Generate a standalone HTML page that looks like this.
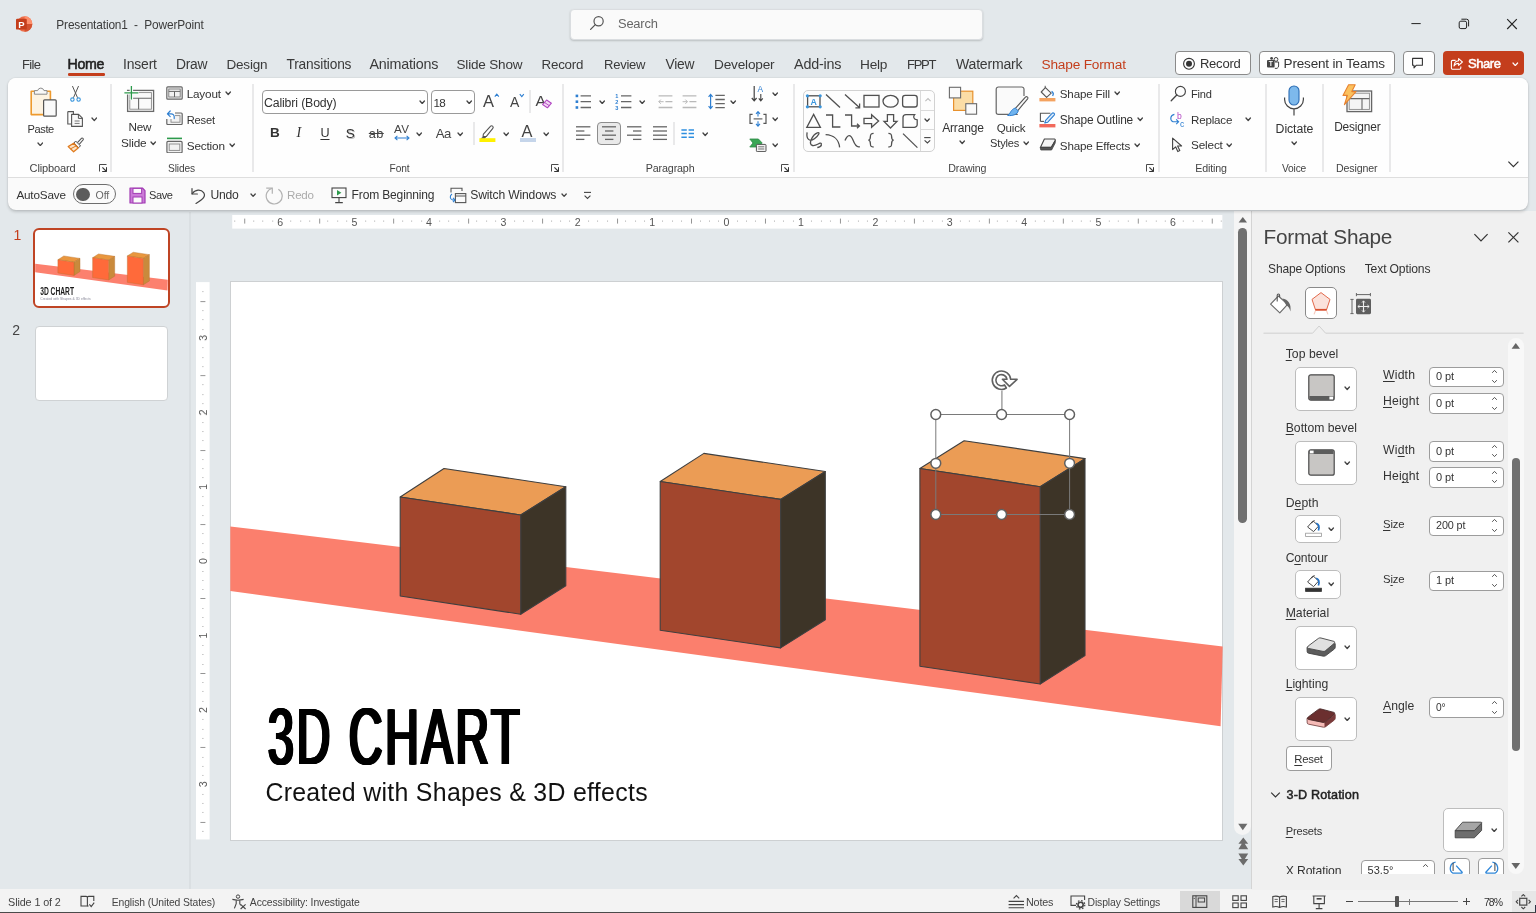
<!DOCTYPE html>
<html lang="en"><head><meta charset="utf-8"><title>Presentation1 - PowerPoint</title>
<style>
html,body{margin:0;padding:0}
body{width:1536px;height:913px;overflow:hidden;position:relative;font-family:"Liberation Sans", sans-serif;background:#E3E8EB}
#app{position:absolute;left:0;top:0;width:1536px;height:913px;overflow:hidden;will-change:transform}
.a{position:absolute;display:block}
.t{position:absolute;white-space:pre;line-height:1}
u{text-decoration:underline;text-underline-offset:1.5px;text-decoration-thickness:1px}

</style></head><body>
<div id="app">
<div class="a" style="left:0.00px;top:211.00px;width:190.00px;height:678.50px;background:#E3E8EB;"></div>
<div class="a" style="left:189.00px;top:212.00px;width:2.00px;height:677.50px;background:#DADFE2;"></div>
<div class="t" style='left:13.40px;top:228.00px;font-size:14px;color:#C43E1C;'>1</div>
<div class="a" style="left:32.90px;top:227.90px;width:137.60px;height:79.90px;background:#fff;border:2.4px solid #BF4424;box-sizing:border-box;border-radius:6px;"></div>
<svg class="a" style="left:35.30px;top:230.80px;border-radius:3px;overflow:hidden;" width="133" height="74.8" viewBox="0 0 133 74.8"><g transform="translate(-30.57,-37.64) scale(0.1336)"><polygon points="230.3,526.4 1222.7,646.6 1220.6,726.2 230.3,591.1" fill="#FC806E"/><polygon points="400.2,497.0 444.0,468.5 565.8,486.7 520.7,515.0" fill="#E9973F" stroke="#B5722E" stroke-width="3" stroke-linejoin="round"/><polygon points="520.7,515.0 565.8,486.7 565.8,585.7 520.7,614.2" fill="#C98A3C" stroke="#B5722E" stroke-width="3" stroke-linejoin="round"/><polygon points="400.2,497.0 520.7,515.0 520.7,614.2 400.2,596.0" fill="#FF6A3A" stroke="#B5722E" stroke-width="3" stroke-linejoin="round"/><polygon points="660.2,481.5 703.9,453.4 825.3,471.5 780.6,499.4" fill="#E9973F" stroke="#B5722E" stroke-width="3" stroke-linejoin="round"/><polygon points="780.6,499.4 825.3,471.5 825.3,619.8 780.6,647.9" fill="#C98A3C" stroke="#B5722E" stroke-width="3" stroke-linejoin="round"/><polygon points="660.2,481.5 780.6,499.4 780.6,647.9 660.2,630.3" fill="#FF6A3A" stroke="#B5722E" stroke-width="3" stroke-linejoin="round"/><polygon points="919.9,468.5 964.1,440.7 1085.0,458.6 1040.2,486.8" fill="#E9973F" stroke="#B5722E" stroke-width="3" stroke-linejoin="round"/><polygon points="1040.2,486.8 1085.0,458.6 1085.0,655.6 1040.2,684.0" fill="#C98A3C" stroke="#B5722E" stroke-width="3" stroke-linejoin="round"/><polygon points="919.9,468.5 1040.2,486.8 1040.2,684.0 919.9,666.2" fill="#FF6A3A" stroke="#B5722E" stroke-width="3" stroke-linejoin="round"/></g><text x="5.2" y="64.3" font-family="Liberation Sans, sans-serif" font-weight="700" font-size="11.4" fill="#1a1a1a" textLength="33.8" lengthAdjust="spacingAndGlyphs">3D CHART</text><text x="5.2" y="69" font-family="Liberation Sans, sans-serif" font-size="3.2" fill="#8a8a9a" textLength="50.6" lengthAdjust="spacingAndGlyphs">Created with Shapes &amp; 3D effects</text></svg>
<div class="t" style='left:12.20px;top:323.00px;font-size:14px;color:#444;'>2</div>
<div class="a" style="left:35.20px;top:325.90px;width:133.10px;height:74.70px;background:#fff;border:1px solid #CFD2D4;box-sizing:border-box;border-radius:4px;"></div>
<svg class="a" style="left:232.00px;top:215.40px;" width="990.6" height="13.6" viewBox="0 0 990.6 13.6"><rect x="0" y="0" width="990.6" height="13.6" fill="#fff"/><rect x="2.0" y="5.6" width="1" height="1" fill="#a6a6a6"/><line x1="12.5" y1="3.6" x2="12.5" y2="8.6" stroke="#949494" stroke-width="1"/><rect x="21.0" y="5.6" width="1" height="1" fill="#a6a6a6"/><rect x="30.0" y="5.6" width="1" height="1" fill="#a6a6a6"/><rect x="40.0" y="5.6" width="1" height="1" fill="#a6a6a6"/><text x="48.0" y="10.6" font-size="10.6" text-anchor="middle" fill="#555" font-family="Liberation Sans, sans-serif">6</text><rect x="58.0" y="5.6" width="1" height="1" fill="#a6a6a6"/><rect x="68.0" y="5.6" width="1" height="1" fill="#a6a6a6"/><rect x="77.0" y="5.6" width="1" height="1" fill="#a6a6a6"/><line x1="87.5" y1="3.6" x2="87.5" y2="8.6" stroke="#949494" stroke-width="1"/><rect x="95.0" y="5.6" width="1" height="1" fill="#a6a6a6"/><rect x="105.0" y="5.6" width="1" height="1" fill="#a6a6a6"/><rect x="114.0" y="5.6" width="1" height="1" fill="#a6a6a6"/><text x="122.4" y="10.6" font-size="10.6" text-anchor="middle" fill="#555" font-family="Liberation Sans, sans-serif">5</text><rect x="133.0" y="5.6" width="1" height="1" fill="#a6a6a6"/><rect x="142.0" y="5.6" width="1" height="1" fill="#a6a6a6"/><rect x="151.0" y="5.6" width="1" height="1" fill="#a6a6a6"/><line x1="161.5" y1="3.6" x2="161.5" y2="8.6" stroke="#949494" stroke-width="1"/><rect x="170.0" y="5.6" width="1" height="1" fill="#a6a6a6"/><rect x="179.0" y="5.6" width="1" height="1" fill="#a6a6a6"/><rect x="189.0" y="5.6" width="1" height="1" fill="#a6a6a6"/><text x="196.8" y="10.6" font-size="10.6" text-anchor="middle" fill="#555" font-family="Liberation Sans, sans-serif">4</text><rect x="207.0" y="5.6" width="1" height="1" fill="#a6a6a6"/><rect x="216.0" y="5.6" width="1" height="1" fill="#a6a6a6"/><rect x="226.0" y="5.6" width="1" height="1" fill="#a6a6a6"/><line x1="236.5" y1="3.6" x2="236.5" y2="8.6" stroke="#949494" stroke-width="1"/><rect x="244.0" y="5.6" width="1" height="1" fill="#a6a6a6"/><rect x="254.0" y="5.6" width="1" height="1" fill="#a6a6a6"/><rect x="263.0" y="5.6" width="1" height="1" fill="#a6a6a6"/><text x="271.3" y="10.6" font-size="10.6" text-anchor="middle" fill="#555" font-family="Liberation Sans, sans-serif">3</text><rect x="282.0" y="5.6" width="1" height="1" fill="#a6a6a6"/><rect x="291.0" y="5.6" width="1" height="1" fill="#a6a6a6"/><rect x="300.0" y="5.6" width="1" height="1" fill="#a6a6a6"/><line x1="310.5" y1="3.6" x2="310.5" y2="8.6" stroke="#949494" stroke-width="1"/><rect x="319.0" y="5.6" width="1" height="1" fill="#a6a6a6"/><rect x="328.0" y="5.6" width="1" height="1" fill="#a6a6a6"/><rect x="337.0" y="5.6" width="1" height="1" fill="#a6a6a6"/><text x="345.7" y="10.6" font-size="10.6" text-anchor="middle" fill="#555" font-family="Liberation Sans, sans-serif">2</text><rect x="356.0" y="5.6" width="1" height="1" fill="#a6a6a6"/><rect x="365.0" y="5.6" width="1" height="1" fill="#a6a6a6"/><rect x="375.0" y="5.6" width="1" height="1" fill="#a6a6a6"/><line x1="385.5" y1="3.6" x2="385.5" y2="8.6" stroke="#949494" stroke-width="1"/><rect x="393.0" y="5.6" width="1" height="1" fill="#a6a6a6"/><rect x="403.0" y="5.6" width="1" height="1" fill="#a6a6a6"/><rect x="412.0" y="5.6" width="1" height="1" fill="#a6a6a6"/><text x="420.1" y="10.6" font-size="10.6" text-anchor="middle" fill="#555" font-family="Liberation Sans, sans-serif">1</text><rect x="430.0" y="5.6" width="1" height="1" fill="#a6a6a6"/><rect x="440.0" y="5.6" width="1" height="1" fill="#a6a6a6"/><rect x="449.0" y="5.6" width="1" height="1" fill="#a6a6a6"/><line x1="459.5" y1="3.6" x2="459.5" y2="8.6" stroke="#949494" stroke-width="1"/><rect x="468.0" y="5.6" width="1" height="1" fill="#a6a6a6"/><rect x="477.0" y="5.6" width="1" height="1" fill="#a6a6a6"/><rect x="486.0" y="5.6" width="1" height="1" fill="#a6a6a6"/><text x="494.5" y="10.6" font-size="10.6" text-anchor="middle" fill="#555" font-family="Liberation Sans, sans-serif">0</text><rect x="505.0" y="5.6" width="1" height="1" fill="#a6a6a6"/><rect x="514.0" y="5.6" width="1" height="1" fill="#a6a6a6"/><rect x="523.0" y="5.6" width="1" height="1" fill="#a6a6a6"/><line x1="533.5" y1="3.6" x2="533.5" y2="8.6" stroke="#949494" stroke-width="1"/><rect x="542.0" y="5.6" width="1" height="1" fill="#a6a6a6"/><rect x="551.0" y="5.6" width="1" height="1" fill="#a6a6a6"/><rect x="561.0" y="5.6" width="1" height="1" fill="#a6a6a6"/><text x="569.0" y="10.6" font-size="10.6" text-anchor="middle" fill="#555" font-family="Liberation Sans, sans-serif">1</text><rect x="579.0" y="5.6" width="1" height="1" fill="#a6a6a6"/><rect x="589.0" y="5.6" width="1" height="1" fill="#a6a6a6"/><rect x="598.0" y="5.6" width="1" height="1" fill="#a6a6a6"/><line x1="608.5" y1="3.6" x2="608.5" y2="8.6" stroke="#949494" stroke-width="1"/><rect x="616.0" y="5.6" width="1" height="1" fill="#a6a6a6"/><rect x="626.0" y="5.6" width="1" height="1" fill="#a6a6a6"/><rect x="635.0" y="5.6" width="1" height="1" fill="#a6a6a6"/><text x="643.4" y="10.6" font-size="10.6" text-anchor="middle" fill="#555" font-family="Liberation Sans, sans-serif">2</text><rect x="654.0" y="5.6" width="1" height="1" fill="#a6a6a6"/><rect x="663.0" y="5.6" width="1" height="1" fill="#a6a6a6"/><rect x="672.0" y="5.6" width="1" height="1" fill="#a6a6a6"/><line x1="682.5" y1="3.6" x2="682.5" y2="8.6" stroke="#949494" stroke-width="1"/><rect x="691.0" y="5.6" width="1" height="1" fill="#a6a6a6"/><rect x="700.0" y="5.6" width="1" height="1" fill="#a6a6a6"/><rect x="710.0" y="5.6" width="1" height="1" fill="#a6a6a6"/><text x="717.8" y="10.6" font-size="10.6" text-anchor="middle" fill="#555" font-family="Liberation Sans, sans-serif">3</text><rect x="728.0" y="5.6" width="1" height="1" fill="#a6a6a6"/><rect x="737.0" y="5.6" width="1" height="1" fill="#a6a6a6"/><rect x="747.0" y="5.6" width="1" height="1" fill="#a6a6a6"/><line x1="757.5" y1="3.6" x2="757.5" y2="8.6" stroke="#949494" stroke-width="1"/><rect x="765.0" y="5.6" width="1" height="1" fill="#a6a6a6"/><rect x="775.0" y="5.6" width="1" height="1" fill="#a6a6a6"/><rect x="784.0" y="5.6" width="1" height="1" fill="#a6a6a6"/><text x="792.3" y="10.6" font-size="10.6" text-anchor="middle" fill="#555" font-family="Liberation Sans, sans-serif">4</text><rect x="803.0" y="5.6" width="1" height="1" fill="#a6a6a6"/><rect x="812.0" y="5.6" width="1" height="1" fill="#a6a6a6"/><rect x="821.0" y="5.6" width="1" height="1" fill="#a6a6a6"/><line x1="831.5" y1="3.6" x2="831.5" y2="8.6" stroke="#949494" stroke-width="1"/><rect x="840.0" y="5.6" width="1" height="1" fill="#a6a6a6"/><rect x="849.0" y="5.6" width="1" height="1" fill="#a6a6a6"/><rect x="858.0" y="5.6" width="1" height="1" fill="#a6a6a6"/><text x="866.7" y="10.6" font-size="10.6" text-anchor="middle" fill="#555" font-family="Liberation Sans, sans-serif">5</text><rect x="877.0" y="5.6" width="1" height="1" fill="#a6a6a6"/><rect x="886.0" y="5.6" width="1" height="1" fill="#a6a6a6"/><rect x="896.0" y="5.6" width="1" height="1" fill="#a6a6a6"/><line x1="906.5" y1="3.6" x2="906.5" y2="8.6" stroke="#949494" stroke-width="1"/><rect x="914.0" y="5.6" width="1" height="1" fill="#a6a6a6"/><rect x="924.0" y="5.6" width="1" height="1" fill="#a6a6a6"/><rect x="933.0" y="5.6" width="1" height="1" fill="#a6a6a6"/><text x="941.1" y="10.6" font-size="10.6" text-anchor="middle" fill="#555" font-family="Liberation Sans, sans-serif">6</text><rect x="951.0" y="5.6" width="1" height="1" fill="#a6a6a6"/><rect x="961.0" y="5.6" width="1" height="1" fill="#a6a6a6"/><rect x="970.0" y="5.6" width="1" height="1" fill="#a6a6a6"/><line x1="980.5" y1="3.6" x2="980.5" y2="8.6" stroke="#949494" stroke-width="1"/><rect x="989.0" y="5.6" width="1" height="1" fill="#a6a6a6"/></svg>
<svg class="a" style="left:196.00px;top:282.00px;" width="13.6" height="557.6" viewBox="0 0 13.6 557.6"><rect x="0" y="0" width="13.6" height="557.6" fill="#fff"/><rect x="6.4" y="9.0" width="1" height="1" fill="#a6a6a6"/><line x1="4.4" y1="19.5" x2="9.4" y2="19.5" stroke="#949494" stroke-width="1"/><rect x="6.4" y="28.0" width="1" height="1" fill="#a6a6a6"/><rect x="6.4" y="37.0" width="1" height="1" fill="#a6a6a6"/><rect x="6.4" y="47.0" width="1" height="1" fill="#a6a6a6"/><text transform="translate(10.6,55.8) rotate(-90)" font-size="10.6" text-anchor="middle" fill="#555" font-family="Liberation Sans, sans-serif">3</text><rect x="6.4" y="65.0" width="1" height="1" fill="#a6a6a6"/><rect x="6.4" y="75.0" width="1" height="1" fill="#a6a6a6"/><rect x="6.4" y="84.0" width="1" height="1" fill="#a6a6a6"/><line x1="4.4" y1="93.5" x2="9.4" y2="93.5" stroke="#949494" stroke-width="1"/><rect x="6.4" y="102.0" width="1" height="1" fill="#a6a6a6"/><rect x="6.4" y="112.0" width="1" height="1" fill="#a6a6a6"/><rect x="6.4" y="121.0" width="1" height="1" fill="#a6a6a6"/><text transform="translate(10.6,130.2) rotate(-90)" font-size="10.6" text-anchor="middle" fill="#555" font-family="Liberation Sans, sans-serif">2</text><rect x="6.4" y="140.0" width="1" height="1" fill="#a6a6a6"/><rect x="6.4" y="149.0" width="1" height="1" fill="#a6a6a6"/><rect x="6.4" y="158.0" width="1" height="1" fill="#a6a6a6"/><line x1="4.4" y1="168.5" x2="9.4" y2="168.5" stroke="#949494" stroke-width="1"/><rect x="6.4" y="177.0" width="1" height="1" fill="#a6a6a6"/><rect x="6.4" y="186.0" width="1" height="1" fill="#a6a6a6"/><rect x="6.4" y="195.0" width="1" height="1" fill="#a6a6a6"/><text transform="translate(10.6,204.7) rotate(-90)" font-size="10.6" text-anchor="middle" fill="#555" font-family="Liberation Sans, sans-serif">1</text><rect x="6.4" y="214.0" width="1" height="1" fill="#a6a6a6"/><rect x="6.4" y="223.0" width="1" height="1" fill="#a6a6a6"/><rect x="6.4" y="233.0" width="1" height="1" fill="#a6a6a6"/><line x1="4.4" y1="242.5" x2="9.4" y2="242.5" stroke="#949494" stroke-width="1"/><rect x="6.4" y="251.0" width="1" height="1" fill="#a6a6a6"/><rect x="6.4" y="261.0" width="1" height="1" fill="#a6a6a6"/><rect x="6.4" y="270.0" width="1" height="1" fill="#a6a6a6"/><text transform="translate(10.6,279.1) rotate(-90)" font-size="10.6" text-anchor="middle" fill="#555" font-family="Liberation Sans, sans-serif">0</text><rect x="6.4" y="289.0" width="1" height="1" fill="#a6a6a6"/><rect x="6.4" y="298.0" width="1" height="1" fill="#a6a6a6"/><rect x="6.4" y="307.0" width="1" height="1" fill="#a6a6a6"/><line x1="4.4" y1="316.5" x2="9.4" y2="316.5" stroke="#949494" stroke-width="1"/><rect x="6.4" y="326.0" width="1" height="1" fill="#a6a6a6"/><rect x="6.4" y="335.0" width="1" height="1" fill="#a6a6a6"/><rect x="6.4" y="344.0" width="1" height="1" fill="#a6a6a6"/><text transform="translate(10.6,353.5) rotate(-90)" font-size="10.6" text-anchor="middle" fill="#555" font-family="Liberation Sans, sans-serif">1</text><rect x="6.4" y="363.0" width="1" height="1" fill="#a6a6a6"/><rect x="6.4" y="372.0" width="1" height="1" fill="#a6a6a6"/><rect x="6.4" y="382.0" width="1" height="1" fill="#a6a6a6"/><line x1="4.4" y1="391.5" x2="9.4" y2="391.5" stroke="#949494" stroke-width="1"/><rect x="6.4" y="400.0" width="1" height="1" fill="#a6a6a6"/><rect x="6.4" y="409.0" width="1" height="1" fill="#a6a6a6"/><rect x="6.4" y="419.0" width="1" height="1" fill="#a6a6a6"/><text transform="translate(10.6,428.0) rotate(-90)" font-size="10.6" text-anchor="middle" fill="#555" font-family="Liberation Sans, sans-serif">2</text><rect x="6.4" y="437.0" width="1" height="1" fill="#a6a6a6"/><rect x="6.4" y="447.0" width="1" height="1" fill="#a6a6a6"/><rect x="6.4" y="456.0" width="1" height="1" fill="#a6a6a6"/><line x1="4.4" y1="465.5" x2="9.4" y2="465.5" stroke="#949494" stroke-width="1"/><rect x="6.4" y="475.0" width="1" height="1" fill="#a6a6a6"/><rect x="6.4" y="484.0" width="1" height="1" fill="#a6a6a6"/><rect x="6.4" y="493.0" width="1" height="1" fill="#a6a6a6"/><text transform="translate(10.6,502.4) rotate(-90)" font-size="10.6" text-anchor="middle" fill="#555" font-family="Liberation Sans, sans-serif">3</text><rect x="6.4" y="512.0" width="1" height="1" fill="#a6a6a6"/><rect x="6.4" y="521.0" width="1" height="1" fill="#a6a6a6"/><rect x="6.4" y="530.0" width="1" height="1" fill="#a6a6a6"/><line x1="4.4" y1="540.5" x2="9.4" y2="540.5" stroke="#949494" stroke-width="1"/><rect x="6.4" y="549.0" width="1" height="1" fill="#a6a6a6"/></svg>
<div class="a" style="left:229.80px;top:281.20px;width:993.00px;height:559.40px;background:#fff;border:1px solid #CDD0D2;box-sizing:border-box;"></div>
<svg class="a" style="left:230.00px;top:281.00px;" width="993" height="560" viewBox="0 0 993 560"><polygon points="0.30000000000001137,245.39999999999998 992.7,365.6 990.5999999999999,445.20000000000005 0.30000000000001137,310.1" fill="#FB7F6D"/><g transform="translate(-230,-281)"><polygon points="400.2,497.0 444.0,468.5 565.8,486.7 520.7,515.0" fill="#EB9C55" stroke="#3f3f3f" stroke-width="1.1" stroke-linejoin="round"/><polygon points="520.7,515.0 565.8,486.7 565.8,585.7 520.7,614.2" fill="#3D3427" stroke="#3f3f3f" stroke-width="1.1" stroke-linejoin="round"/><polygon points="400.2,497.0 520.7,515.0 520.7,614.2 400.2,596.0" fill="#A2462D" stroke="#3f3f3f" stroke-width="1.1" stroke-linejoin="round"/><polygon points="660.2,481.5 703.9,453.4 825.3,471.5 780.6,499.4" fill="#EB9C55" stroke="#3f3f3f" stroke-width="1.1" stroke-linejoin="round"/><polygon points="780.6,499.4 825.3,471.5 825.3,619.8 780.6,647.9" fill="#3D3427" stroke="#3f3f3f" stroke-width="1.1" stroke-linejoin="round"/><polygon points="660.2,481.5 780.6,499.4 780.6,647.9 660.2,630.3" fill="#A2462D" stroke="#3f3f3f" stroke-width="1.1" stroke-linejoin="round"/><polygon points="919.9,468.5 964.1,440.7 1085.0,458.6 1040.2,486.8" fill="#EB9C55" stroke="#3f3f3f" stroke-width="1.1" stroke-linejoin="round"/><polygon points="1040.2,486.8 1085.0,458.6 1085.0,655.6 1040.2,684.0" fill="#3D3427" stroke="#3f3f3f" stroke-width="1.1" stroke-linejoin="round"/><polygon points="919.9,468.5 1040.2,486.8 1040.2,684.0 919.9,666.2" fill="#A2462D" stroke="#3f3f3f" stroke-width="1.1" stroke-linejoin="round"/><rect x="935.8" y="414.5" width="133.79999999999995" height="100.0" fill="none" stroke="#7a7a7a" stroke-width="1"/><line x1="1001.9" y1="414.5" x2="1001.9" y2="389" stroke="#9a9a9a" stroke-width="1.4"/><circle cx="935.8" cy="414.5" r="4.9" fill="#fff" stroke="#606060" stroke-width="1.5"/><circle cx="1001.6" cy="414.5" r="4.9" fill="#fff" stroke="#606060" stroke-width="1.5"/><circle cx="1069.6" cy="414.5" r="4.9" fill="#fff" stroke="#606060" stroke-width="1.5"/><circle cx="935.8" cy="463.3" r="4.9" fill="#fff" stroke="#606060" stroke-width="1.5"/><circle cx="1069.6" cy="463.3" r="4.9" fill="#fff" stroke="#606060" stroke-width="1.5"/><circle cx="935.8" cy="514.5" r="4.9" fill="#fff" stroke="#606060" stroke-width="1.5"/><circle cx="1001.6" cy="514.5" r="4.9" fill="#fff" stroke="#606060" stroke-width="1.5"/><circle cx="1069.6" cy="514.5" r="4.9" fill="#fff" stroke="#606060" stroke-width="1.5"/><g transform="translate(1001.5,380.2)"><circle r="10.6" fill="#fff" stroke="none"/>
<path d="M0.9 -0.9 H5.53 A5.6 5.6 0 1 0 2.97 4.75 L4.88 7.80 A9.2 9.2 0 1 1 9.16 -0.9 H15.6 L8 6.2 Z" fill="#fff" stroke="#606060" stroke-width="1.6" stroke-linejoin="round"/></g></g></svg>
<div class="t" style='left:267.60px;top:697.00px;font-size:80px;color:#000;letter-spacing:5px;text-shadow:1px 0 0 #000,-1px 0 0 #000,2px 0 0 #000,-2px 0 0 #000,2.7px 0 0 #000,-2.7px 0 0 #000;transform:scaleX(0.5798);transform-origin:0 50%;'>3D CHART</div>
<div class="t" style='left:265.40px;top:780.00px;font-size:24.87px;color:#111;letter-spacing:0.308px;'>Created with Shapes &amp; 3D effects</div>
<div class="a" style="left:1234.20px;top:211.00px;width:17.00px;height:624.40px;background:#F5F5F5;border-radius:0 0 8.5px 8.5px;"></div>
<svg class="a" style="left:1238.00px;top:216.00px;" width="10" height="8" viewBox="0 0 10 8"><path d="M0.6 6.6 L4.8 1 L9 6.6 Z" fill="#666"/></svg>
<div class="a" style="left:1238.40px;top:228.20px;width:8.80px;height:295.00px;background:#707070;border-radius:4.4px;"></div>
<svg class="a" style="left:1238.00px;top:823.00px;" width="10" height="8" viewBox="0 0 10 8"><path d="M0.2 0.8 H9.4 L4.8 7.2 Z" fill="#6c6c6c"/></svg>
<svg class="a" style="left:1237.60px;top:836.60px;" width="11" height="13" viewBox="0 0 11 13"><path d="M5.3 0.4 L10.2 6.8 H0.4 Z M5.3 4.2 L10.2 12.2 H0.4 Z" fill="#6c6c6c"/></svg>
<svg class="a" style="left:1237.60px;top:853.40px;" width="11" height="13" viewBox="0 0 11 13"><path d="M0.4 0.6 H10.2 L5.3 8.6 Z M0.4 6 H10.2 L5.3 12.4 Z" fill="#6c6c6c"/></svg>
<div class="a" style="left:1251.20px;top:211.00px;width:284.80px;height:678.60px;background:#F0F0F0;"></div>
<div class="a" style="left:1251.00px;top:211.00px;width:1.00px;height:678.60px;background:#D4D4D4;"></div>
<div class="t" style='left:1263.60px;top:227.00px;font-size:20.8px;color:#444;letter-spacing:-0.271px;'>Format Shape</div>
<svg class="a" style="left:1473.00px;top:232.00px;" width="16" height="11" viewBox="0 0 16 11"><polyline points="1.4,2.2 8,8.8 14.6,2.2" fill="none" stroke="#333" stroke-width="1.2"/></svg>
<svg class="a" style="left:1507.00px;top:231.40px;" width="13" height="13" viewBox="0 0 13 13"><path d="M1.4 1.4 L11.4 11.4 M11.4 1.4 L1.4 11.4" stroke="#333" stroke-width="1.2"/></svg>
<div class="t" style='left:1268.10px;top:263.00px;font-size:11.99px;color:#333;letter-spacing:-0.161px;'>Shape Options</div>
<div class="t" style='left:1364.70px;top:263.00px;font-size:12.15px;color:#333;letter-spacing:-0.150px;'>Text Options</div>
<svg class="a" style="left:1269.00px;top:293.10px;" width="24" height="23" viewBox="0 0 24 23"><path d="M9.4 3 L18.6 11.4 L10.8 19.8 L1.6 11.2 Z" fill="#fff" stroke="#6a6a6a" stroke-width="1.15" stroke-linejoin="round"/>
<path d="M8.2 8.4 V2.2 A1.2 1.2 0 0 1 10.6 2.2 V4" fill="none" stroke="#555" stroke-width="1.1"/>
<path d="M13.4 5.4 C19 6.4 22.6 10.6 21.4 18.4 C20.4 15 19.4 13.6 17.4 12.6 Z" fill="#666"/></svg>
<div class="a" style="left:1305.20px;top:287.30px;width:32.00px;height:31.70px;background:#fff;border:1px solid #8a8a8a;box-sizing:border-box;border-radius:5px;"></div>
<svg class="a" style="left:1309.00px;top:291.00px;" width="24" height="25" viewBox="0 0 24 25"><path d="M12 1.6 L21 8.4 L17.6 18.6 H6.4 L3 8.4 Z" fill="#FBE2DB" stroke="#E2694B" stroke-width="1" stroke-linejoin="round"/>
<path d="M6.2 18.8 H17.8" stroke="#D9502E" stroke-width="1.8"/>
<path d="M6.4 20 L5 23.4 M17.6 20 L19 23.4" stroke="#F6C9BC" stroke-width="1.1"/></svg>
<svg class="a" style="left:1349.60px;top:293.30px;" width="23" height="23" viewBox="0 0 23 23"><path d="M6.4 1.6 H20.4 M6.4 0 V3.2 M20.4 0 V3.2" stroke="#666" stroke-width="1"/>
<path d="M2 6.4 V20.6 M0.4 6.4 H3.6 M0.4 20.6 H3.6" stroke="#666" stroke-width="1"/>
<rect x="6" y="5.8" width="15" height="15.4" rx="1.4" fill="#5E5E5E"/>
<path d="M13.5 8 V19 M8 13.5 H19" stroke="#EDEDED" stroke-width="1.1"/>
<path d="M12 9.6 L13.5 7.8 L15 9.6 M12 17.4 L13.5 19.2 L15 17.4 M9.6 12 L7.8 13.5 L9.6 15 M17.4 12 L19.2 13.5 L17.4 15" fill="none" stroke="#EDEDED" stroke-width="0.9"/></svg>
<svg class="a" style="left:1263.00px;top:324.00px;" width="262" height="11" viewBox="0 0 262 11"><path d="M0.5 9.2 H49.6 L56.1 2 L62.6 9.2 H260.6" fill="none" stroke="#CFCFCF" stroke-width="1"/></svg>
<div class="a" style="left:1507.60px;top:338.00px;width:16.00px;height:536.40px;background:#F8F8F8;border-radius:8px;"></div>
<svg class="a" style="left:1511.00px;top:342.00px;" width="10" height="8" viewBox="0 0 10 8"><path d="M0.6 6.8 L4.8 1 L9 6.8 Z" fill="#666"/></svg>
<div class="a" style="left:1511.60px;top:458.00px;width:8.40px;height:293.20px;background:#707070;border-radius:4.2px;"></div>
<svg class="a" style="left:1511.00px;top:861.60px;" width="10" height="8" viewBox="0 0 10 8"><path d="M0.4 1 H9.2 L4.8 7 Z" fill="#666"/></svg>
<div class="t" style='left:1285.70px;top:348.00px;font-size:12.2px;color:#333;letter-spacing:0.041px;'><u>T</u>op bevel</div>
<div class="a" style="left:1295.20px;top:366.50px;width:61.60px;height:44.00px;background:#fff;border:1px solid #BDBDBD;box-sizing:border-box;border-radius:5px;"></div>
<svg class="a" style="left:1307.60px;top:374.40px;" width="27" height="27" viewBox="0 0 27 27"><rect x="0.8" y="0.8" width="25.4" height="25.4" rx="2" fill="#C8C6C4" stroke="#4a4a4a" stroke-width="1.2"/>
<path d="M1.4 22 H25.6 V24.6 A1.4 1.4 0 0 1 24.2 26 H2.8 A1.4 1.4 0 0 1 1.4 24.6 Z" fill="#5c5c5c"/><rect x="21.4" y="22.6" width="3.6" height="2.8" fill="#fff"/></svg>
<svg class="a" style="left:1344.19px;top:386.36px;" width="6.43" height="4.48" viewBox="0 0 6.43 4.48"><polyline points="1,1 3.21,3.48 5.43,1" fill="none" stroke="#444" stroke-width="1.3" stroke-linecap="round" stroke-linejoin="round"/></svg>
<div class="t" style='left:1383.00px;top:369.00px;font-size:12.21px;color:#333;letter-spacing:0.200px;'><u>W</u>idth</div>
<div class="a" style="left:1429.20px;top:366.50px;width:74.70px;height:20.70px;background:#fff;border:1px solid #9c9c9c;box-sizing:border-box;border-radius:4px;"></div>
<div class="t" style='left:1436.10px;top:371.00px;font-size:10.99px;color:#333;letter-spacing:-0.149px;'>0 pt</div>
<svg class="a" style="left:1491.40px;top:368.25px;" width="7" height="7" viewBox="0 0 7 7"><polyline points="1.2,4.8 3.5,2.4 5.8,4.8" fill="none" stroke="#555" stroke-width="1"/></svg>
<svg class="a" style="left:1491.40px;top:377.85px;" width="7" height="7" viewBox="0 0 7 7"><polyline points="1.2,2.2 3.5,4.6 5.8,2.2" fill="none" stroke="#555" stroke-width="1"/></svg>
<div class="t" style='left:1383.00px;top:395.00px;font-size:12.2px;color:#333;letter-spacing:0.170px;'><u>H</u>eight</div>
<div class="a" style="left:1429.20px;top:393.20px;width:74.70px;height:20.60px;background:#fff;border:1px solid #9c9c9c;box-sizing:border-box;border-radius:4px;"></div>
<div class="t" style='left:1436.10px;top:398.00px;font-size:10.99px;color:#333;letter-spacing:-0.149px;'>0 pt</div>
<svg class="a" style="left:1491.40px;top:394.90px;" width="7" height="7" viewBox="0 0 7 7"><polyline points="1.2,4.8 3.5,2.4 5.8,4.8" fill="none" stroke="#555" stroke-width="1"/></svg>
<svg class="a" style="left:1491.40px;top:404.50px;" width="7" height="7" viewBox="0 0 7 7"><polyline points="1.2,2.2 3.5,4.6 5.8,2.2" fill="none" stroke="#555" stroke-width="1"/></svg>
<div class="t" style='left:1285.70px;top:422.00px;font-size:12.2px;color:#333;letter-spacing:0.013px;'><u>B</u>ottom bevel</div>
<div class="a" style="left:1295.20px;top:441.10px;width:61.60px;height:43.70px;background:#fff;border:1px solid #BDBDBD;box-sizing:border-box;border-radius:5px;"></div>
<svg class="a" style="left:1307.60px;top:448.60px;" width="27" height="27" viewBox="0 0 27 27"><rect x="0.8" y="0.8" width="25.4" height="25.4" rx="2" fill="#C8C6C4" stroke="#4a4a4a" stroke-width="1.2"/>
<path d="M1.4 5 H25.6 V2.4 A1.4 1.4 0 0 0 24.2 1 H2.8 A1.4 1.4 0 0 0 1.4 2.4 Z" fill="#5c5c5c"/><rect x="2" y="1.6" width="3.6" height="2.8" fill="#fff"/></svg>
<svg class="a" style="left:1344.19px;top:460.76px;" width="6.43" height="4.48" viewBox="0 0 6.43 4.48"><polyline points="1,1 3.21,3.48 5.43,1" fill="none" stroke="#444" stroke-width="1.3" stroke-linecap="round" stroke-linejoin="round"/></svg>
<div class="t" style='left:1383.00px;top:444.00px;font-size:12.21px;color:#333;letter-spacing:0.200px;'>Wi<u>d</u>th</div>
<div class="a" style="left:1429.20px;top:441.10px;width:74.70px;height:20.60px;background:#fff;border:1px solid #9c9c9c;box-sizing:border-box;border-radius:4px;"></div>
<div class="t" style='left:1436.10px;top:446.00px;font-size:10.99px;color:#333;letter-spacing:-0.149px;'>0 pt</div>
<svg class="a" style="left:1491.40px;top:442.80px;" width="7" height="7" viewBox="0 0 7 7"><polyline points="1.2,4.8 3.5,2.4 5.8,4.8" fill="none" stroke="#555" stroke-width="1"/></svg>
<svg class="a" style="left:1491.40px;top:452.40px;" width="7" height="7" viewBox="0 0 7 7"><polyline points="1.2,2.2 3.5,4.6 5.8,2.2" fill="none" stroke="#555" stroke-width="1"/></svg>
<div class="t" style='left:1383.00px;top:470.00px;font-size:12.2px;color:#333;letter-spacing:0.170px;'>Hei<u>g</u>ht</div>
<div class="a" style="left:1429.20px;top:467.10px;width:74.70px;height:20.70px;background:#fff;border:1px solid #9c9c9c;box-sizing:border-box;border-radius:4px;"></div>
<div class="t" style='left:1436.10px;top:472.00px;font-size:10.99px;color:#333;letter-spacing:-0.149px;'>0 pt</div>
<svg class="a" style="left:1491.40px;top:468.85px;" width="7" height="7" viewBox="0 0 7 7"><polyline points="1.2,4.8 3.5,2.4 5.8,4.8" fill="none" stroke="#555" stroke-width="1"/></svg>
<svg class="a" style="left:1491.40px;top:478.45px;" width="7" height="7" viewBox="0 0 7 7"><polyline points="1.2,2.2 3.5,4.6 5.8,2.2" fill="none" stroke="#555" stroke-width="1"/></svg>
<div class="t" style='left:1285.70px;top:497.00px;font-size:12.2px;color:#333;letter-spacing:0.063px;'>D<u>e</u>pth</div>
<div class="a" style="left:1295.20px;top:515.00px;width:45.50px;height:28.20px;background:#fff;border:1px solid #BDBDBD;box-sizing:border-box;border-radius:5px;"></div>
<svg class="a" style="left:1304.60px;top:518.20px;" width="17" height="22" viewBox="0 0 17 22"><path d="M8 2.8 L13.6 8 L8.6 13.6 L2.6 9 Z" fill="#fff" stroke="#4a4a4a" stroke-width="1" stroke-linejoin="round"/>
<path d="M6.4 5.4 L9.6 2.2" stroke="#4a4a4a" stroke-width="0.9"/>
<path d="M11.2 5.2 C14.4 6.4 14.4 9.6 13.4 12.6" fill="none" stroke="#1F6FC4" stroke-width="1.7"/>
<rect x="0.6" y="15.2" width="15.8" height="3.2" fill="#fff" stroke="#999" stroke-width="0.8"/></svg>
<svg class="a" style="left:1328.29px;top:526.96px;" width="6.43" height="4.48" viewBox="0 0 6.43 4.48"><polyline points="1,1 3.21,3.48 5.43,1" fill="none" stroke="#444" stroke-width="1.3" stroke-linecap="round" stroke-linejoin="round"/></svg>
<div class="t" style='left:1383.00px;top:519.00px;font-size:11.33px;color:#333;letter-spacing:-0.179px;'><u>S</u>ize</div>
<div class="a" style="left:1429.20px;top:515.60px;width:74.70px;height:20.20px;background:#fff;border:1px solid #9c9c9c;box-sizing:border-box;border-radius:4px;"></div>
<div class="t" style='left:1436.10px;top:520.00px;font-size:10.8px;color:#333;letter-spacing:-0.147px;'>200 pt</div>
<svg class="a" style="left:1491.40px;top:517.10px;" width="7" height="7" viewBox="0 0 7 7"><polyline points="1.2,4.8 3.5,2.4 5.8,4.8" fill="none" stroke="#555" stroke-width="1"/></svg>
<svg class="a" style="left:1491.40px;top:526.70px;" width="7" height="7" viewBox="0 0 7 7"><polyline points="1.2,2.2 3.5,4.6 5.8,2.2" fill="none" stroke="#555" stroke-width="1"/></svg>
<div class="t" style='left:1285.70px;top:552.00px;font-size:12.14px;color:#333;letter-spacing:-0.175px;'>C<u>o</u>ntour</div>
<div class="a" style="left:1295.20px;top:570.00px;width:45.50px;height:28.80px;background:#fff;border:1px solid #BDBDBD;box-sizing:border-box;border-radius:5px;"></div>
<svg class="a" style="left:1304.60px;top:573.40px;" width="17" height="22" viewBox="0 0 17 22"><path d="M8 2.8 L13.6 8 L8.6 13.6 L2.6 9 Z" fill="#fff" stroke="#4a4a4a" stroke-width="1" stroke-linejoin="round"/>
<path d="M6.4 5.4 L9.6 2.2" stroke="#4a4a4a" stroke-width="0.9"/>
<path d="M11.2 5.2 C14.4 6.4 14.4 9.6 13.4 12.6" fill="none" stroke="#1F6FC4" stroke-width="1.7"/>
<rect x="0.6" y="15.2" width="15.8" height="3.2" fill="#333" stroke="#333" stroke-width="0.8"/></svg>
<svg class="a" style="left:1328.29px;top:582.16px;" width="6.43" height="4.48" viewBox="0 0 6.43 4.48"><polyline points="1,1 3.21,3.48 5.43,1" fill="none" stroke="#444" stroke-width="1.3" stroke-linecap="round" stroke-linejoin="round"/></svg>
<div class="t" style='left:1383.00px;top:574.00px;font-size:11.33px;color:#333;letter-spacing:-0.179px;'>S<u>i</u>ze</div>
<div class="a" style="left:1429.20px;top:570.50px;width:74.70px;height:20.70px;background:#fff;border:1px solid #9c9c9c;box-sizing:border-box;border-radius:4px;"></div>
<div class="t" style='left:1436.10px;top:575.00px;font-size:10.99px;color:#333;letter-spacing:-0.149px;'>1 pt</div>
<svg class="a" style="left:1491.40px;top:572.25px;" width="7" height="7" viewBox="0 0 7 7"><polyline points="1.2,4.8 3.5,2.4 5.8,4.8" fill="none" stroke="#555" stroke-width="1"/></svg>
<svg class="a" style="left:1491.40px;top:581.85px;" width="7" height="7" viewBox="0 0 7 7"><polyline points="1.2,2.2 3.5,4.6 5.8,2.2" fill="none" stroke="#555" stroke-width="1"/></svg>
<div class="t" style='left:1285.70px;top:607.00px;font-size:12.2px;color:#333;letter-spacing:0.006px;'><u>M</u>aterial</div>
<div class="a" style="left:1295.20px;top:626.10px;width:61.60px;height:43.50px;background:#fff;border:1px solid #BDBDBD;box-sizing:border-box;border-radius:5px;"></div>
<svg class="a" style="left:1306.00px;top:637.00px;" width="30" height="20" viewBox="0 0 30 20"><path d="M1 10.4 L1.2 15 Q1.4 16 2.6 16.2 L17.4 19.2 Q18.6 19.4 19.8 18.6 L28.4 12 Q29.2 11.2 29.2 10 V6.6 Z" fill="#5c5c5c" stroke="#444" stroke-width="0.9" stroke-linejoin="round"/>
<path d="M2.2 9 L12.4 1.4 Q13.6 0.6 15 1 L28 4.4 Q29.6 5 28.2 6.4 L19.4 13.8 Q18.4 14.6 17 14.4 L2.4 11.4 Q0.4 10.6 2.2 9 Z" fill="#E0E0E0" stroke="#444" stroke-width="0.9" stroke-linejoin="round"/></svg>
<svg class="a" style="left:1344.19px;top:645.36px;" width="6.43" height="4.48" viewBox="0 0 6.43 4.48"><polyline points="1,1 3.21,3.48 5.43,1" fill="none" stroke="#444" stroke-width="1.3" stroke-linecap="round" stroke-linejoin="round"/></svg>
<div class="t" style='left:1285.70px;top:678.00px;font-size:12.2px;color:#333;letter-spacing:-0.029px;'><u>L</u>ighting</div>
<div class="a" style="left:1295.20px;top:697.40px;width:61.60px;height:43.50px;background:#fff;border:1px solid #BDBDBD;box-sizing:border-box;border-radius:5px;"></div>
<svg class="a" style="left:1306.00px;top:708.40px;" width="30" height="20" viewBox="0 0 30 20"><path d="M1 10.4 L1.2 15 Q1.4 16 2.6 16.2 L17.4 19.2 Q18.6 19.4 19.8 18.6 L28.4 12 Q29.2 11.2 29.2 10 V6.6 Z" fill="#F5BAB6" stroke="#7a4a4a" stroke-width="0.9" stroke-linejoin="round"/>
<path d="M18.4 14.4 L18.6 19.2 Q19.2 19.2 19.8 18.6 L28.4 12 Q29.2 11.2 29.2 10 V6 Z" fill="#7A3A3A"/>
<path d="M2.2 9 L12.4 1.4 Q13.6 0.6 15 1 L28 4.4 Q29.6 5 28.2 6.4 L19.4 13.8 Q18.4 14.6 17 14.4 L2.4 11.4 Q0.4 10.6 2.2 9 Z" fill="#6B2F2F" stroke="#4a2a2a" stroke-width="0.9" stroke-linejoin="round"/></svg>
<svg class="a" style="left:1344.19px;top:716.76px;" width="6.43" height="4.48" viewBox="0 0 6.43 4.48"><polyline points="1,1 3.21,3.48 5.43,1" fill="none" stroke="#444" stroke-width="1.3" stroke-linecap="round" stroke-linejoin="round"/></svg>
<div class="t" style='left:1383.00px;top:700.00px;font-size:12.2px;color:#333;'><u>A</u>ngle</div>
<div class="a" style="left:1429.20px;top:697.40px;width:74.70px;height:20.60px;background:#fff;border:1px solid #9c9c9c;box-sizing:border-box;border-radius:4px;"></div>
<div class="t" style='left:1436.10px;top:703.00px;font-size:10.17px;color:#333;letter-spacing:-0.237px;'>0°</div>
<svg class="a" style="left:1491.40px;top:699.10px;" width="7" height="7" viewBox="0 0 7 7"><polyline points="1.2,4.8 3.5,2.4 5.8,4.8" fill="none" stroke="#555" stroke-width="1"/></svg>
<svg class="a" style="left:1491.40px;top:708.70px;" width="7" height="7" viewBox="0 0 7 7"><polyline points="1.2,2.2 3.5,4.6 5.8,2.2" fill="none" stroke="#555" stroke-width="1"/></svg>
<div class="a" style="left:1285.70px;top:746.40px;width:46.10px;height:24.30px;background:#fff;border:1px solid #9c9c9c;box-sizing:border-box;border-radius:4px;"></div>
<div class="t" style='left:1294.30px;top:754.00px;font-size:11.34px;color:#333;letter-spacing:-0.232px;'><u>R</u>eset</div>
<svg class="a" style="left:1270.00px;top:790.60px;" width="11" height="8" viewBox="0 0 11 8"><polyline points="1.2,1.6 5.5,6 9.8,1.6" fill="none" stroke="#333" stroke-width="1.2"/></svg>
<div class="t" style='left:1286.50px;top:789.00px;font-size:12.58px;color:#222;letter-spacing:0.165px;-webkit-text-stroke:0.5px #222;'>3-D Rotation</div>
<div class="t" style='left:1285.70px;top:826.00px;font-size:11.07px;color:#333;letter-spacing:-0.152px;'><u>P</u>resets</div>
<div class="a" style="left:1442.50px;top:808.00px;width:61.10px;height:43.70px;background:#fff;border:1px solid #BDBDBD;box-sizing:border-box;border-radius:5px;"></div>
<svg class="a" style="left:1454.00px;top:821.40px;" width="29" height="18" viewBox="0 0 29 18"><path d="M1.2 9.6 H20.4 L27.6 1.8 V9.4 L20.4 16.8 H1.2 Z" fill="#6E6E6E" stroke="#444" stroke-width="0.9" stroke-linejoin="round"/>
<path d="M1.2 9.6 L8.6 1.2 H27.2 Q28 1.4 27.4 2.2 L20.4 9.6 Z" fill="#A6A6A6" stroke="#444" stroke-width="0.9" stroke-linejoin="round"/></svg>
<svg class="a" style="left:1491.49px;top:827.96px;" width="6.43" height="4.48" viewBox="0 0 6.43 4.48"><polyline points="1,1 3.21,3.48 5.43,1" fill="none" stroke="#444" stroke-width="1.3" stroke-linecap="round" stroke-linejoin="round"/></svg>
<div class="a" style="left:1252px;top:852px;width:255px;height:22px;overflow:hidden">
<div class="t" style="left:33.7px;top:13.4px;font-size:12.2px;color:#333;letter-spacing:-0.12px"><u>X</u> Rotation</div>
<div class="a" style="left:109.1px;top:8.4px;width:73.6px;height:21px;background:#fff;border:1px solid #9c9c9c;border-radius:4px;box-sizing:border-box"></div>
<div class="t" style="left:115.6px;top:13px;font-size:11px;color:#333">53.5°</div>
<svg class="a" style="left:170.2px;top:10.4px" width="7" height="7"><polyline points="1.2,4.8 3.5,2.4 5.8,4.8" fill="none" stroke="#555" stroke-width="1"/></svg>
<div class="a" style="left:192px;top:5.6px;width:25.6px;height:25px;background:#fff;border:1px solid #9c9c9c;border-radius:4px;box-sizing:border-box"></div>
<div class="a" style="left:226.2px;top:5.6px;width:25.6px;height:25px;background:#fff;border:1px solid #9c9c9c;border-radius:4px;box-sizing:border-box"></div>
<svg class="a" style="left:196px;top:9px" width="18" height="14"><path d="M7.6 1.2 C1.6 2.2 0.6 9.4 5 12.2 H14.4 M8.2 4.6 L14.6 11.8 M11 12.2" fill="none" stroke="#2E86D8" stroke-width="1.3"/><path d="M5.1 1.6 V10" stroke="#444" stroke-width="1"/></svg>
<svg class="a" style="left:230px;top:9px" width="18" height="14"><path d="M10.4 1.2 C16.4 2.2 17.4 9.4 13 12.2 H3.6 M9.8 4.6 L3.4 11.8" fill="none" stroke="#2E86D8" stroke-width="1.3"/><path d="M12.9 1.6 V10" stroke="#444" stroke-width="1"/></svg>
</div>
<div class="a" style="left:0.00px;top:888.50px;width:1536.00px;height:24.50px;background:#F3F3F3;"></div>
<div class="a" style="left:1251.20px;top:888.50px;width:284.80px;height:1.50px;background:#F0F0F0;"></div>
<div class="a" style="left:0.00px;top:911.60px;width:1536.00px;height:1.40px;background:#4a4a4a;"></div>
<div class="t" style='left:8.10px;top:897.00px;font-size:10.81px;color:#444;letter-spacing:-0.120px;'>Slide 1 of 2</div>
<svg class="a" style="left:79.60px;top:894.60px;" width="15" height="14" viewBox="0 0 15 14"><path d="M1 1.4 H6.2 Q7.4 1.4 7.4 2.6 V11 H1 Z M7.4 2.6 Q7.4 1.4 8.6 1.4 H13.8 V6" fill="none" stroke="#444" stroke-width="1.1"/><path d="M7.4 11 H8.6 M9.4 9.4 L11.2 11.6 L14.2 7.6" fill="none" stroke="#444" stroke-width="1.1"/></svg>
<div class="t" style='left:111.70px;top:898.00px;font-size:10.38px;color:#444;letter-spacing:-0.118px;'>English (United States)</div>
<svg class="a" style="left:231.00px;top:894.00px;" width="16" height="16" viewBox="0 0 16 16"><circle cx="7" cy="2.6" r="1.7" fill="none" stroke="#444" stroke-width="1"/><path d="M1.4 5.4 Q7 7 12.6 5.4 M5.2 6.4 V9.6 L3.4 14.4 M8.8 6.4 V9.6 L9.6 11.4" fill="none" stroke="#444" stroke-width="1.1"/><path d="M9.6 10.4 L14.6 15 M14.6 10.4 L9.6 15" stroke="#444" stroke-width="1.1"/></svg>
<div class="t" style='left:249.80px;top:898.00px;font-size:10.41px;color:#444;letter-spacing:-0.110px;'>Accessibility: Investigate</div>
<svg class="a" style="left:1008.00px;top:894.00px;" width="17" height="15" viewBox="0 0 17 15"><polyline points="5.6,4.4 8.4,1.6 11.2,4.4" fill="none" stroke="#444" stroke-width="1.1"/><path d="M0.6 7.4 H16 M0.6 10.6 H16 M0.6 13.8 H16" stroke="#444" stroke-width="1.1"/></svg>
<div class="t" style='left:1026.00px;top:897.00px;font-size:10.78px;color:#444;letter-spacing:-0.172px;'>Notes</div>
<svg class="a" style="left:1070.00px;top:895.00px;" width="16" height="15" viewBox="0 0 16 15"><path d="M6 10.4 H1 V1 H14.6 V5" fill="none" stroke="#444" stroke-width="1.1"/><circle cx="10.6" cy="9.8" r="2.6" fill="none" stroke="#444" stroke-width="1.6"/><circle cx="10.6" cy="9.8" r="4.2" fill="none" stroke="#444" stroke-width="1.2" stroke-dasharray="1.6 1.7"/></svg>
<div class="t" style='left:1087.50px;top:898.00px;font-size:10.41px;color:#444;letter-spacing:-0.121px;'>Display Settings</div>
<div class="a" style="left:1180.20px;top:891.40px;width:39.40px;height:20.20px;background:#D9D9D9;"></div>
<svg class="a" style="left:1192.40px;top:894.60px;" width="16" height="14" viewBox="0 0 16 14"><rect x="0.8" y="0.8" width="14" height="11.6" fill="none" stroke="#444" stroke-width="1.1"/><path d="M4 0.8 V12.4" stroke="#444" stroke-width="1"/><rect x="6.2" y="3" width="6.4" height="4" fill="none" stroke="#444" stroke-width="1"/><path d="M1.6 3.4 H3" stroke="#444" stroke-width="0.8"/></svg>
<svg class="a" style="left:1232.40px;top:894.60px;" width="16" height="14" viewBox="0 0 16 14"><rect x="0.8" y="0.8" width="5.4" height="4.6" fill="none" stroke="#444" stroke-width="1.1"/><rect x="9" y="0.8" width="5.4" height="4.6" fill="none" stroke="#444" stroke-width="1.1"/><rect x="0.8" y="8" width="5.4" height="4.6" fill="none" stroke="#444" stroke-width="1.1"/><rect x="9" y="8" width="5.4" height="4.6" fill="none" stroke="#444" stroke-width="1.1"/></svg>
<svg class="a" style="left:1272.00px;top:894.60px;" width="16" height="14" viewBox="0 0 16 14"><path d="M7.6 2 Q4.4 0.4 0.8 1.6 V12 Q4.4 10.8 7.6 12.4 Q10.8 10.8 14.4 12 V1.6 Q10.8 0.4 7.6 2 Z M7.6 2 V12.4" fill="none" stroke="#444" stroke-width="1.1"/><path d="M2.6 4.4 H5.8 M2.6 6.6 H5.8 M9.4 4.4 H12.6 M9.4 6.6 H12.6" stroke="#444" stroke-width="0.8"/></svg>
<svg class="a" style="left:1312.40px;top:894.60px;" width="15" height="15" viewBox="0 0 15 15"><path d="M0.6 1 H13.6 M1.8 1 V8.6 H12.4 V1 M7.1 8.6 V13.4 M3.8 13.6 H10.4" fill="none" stroke="#444" stroke-width="1.1"/><rect x="4.6" y="3" width="5" height="1.6" fill="#444"/></svg>
<div class="a" style="left:1345.60px;top:901.30px;width:7.20px;height:1.00px;background:#444;"></div>
<div class="a" style="left:1358.30px;top:901.40px;width:99.50px;height:0.80px;background:#777;"></div>
<div class="a" style="left:1394.60px;top:895.60px;width:4.60px;height:11.40px;background:#555;border-radius:1px;"></div>
<div class="a" style="left:1408.60px;top:898.60px;width:0.80px;height:6.40px;background:#777;"></div>
<div class="a" style="left:1463.20px;top:901.30px;width:7.30px;height:1.00px;background:#444;"></div>
<div class="a" style="left:1466.40px;top:898.10px;width:1.00px;height:7.30px;background:#444;"></div>
<div class="t" style='left:1483.90px;top:898.00px;font-size:10.44px;color:#333;letter-spacing:-0.848px;'>78%</div>
<div class="a" style="left:1512.00px;top:891.40px;width:24.00px;height:20.20px;background:#E7E7E7;"></div>
<svg class="a" style="left:1515.00px;top:893.60px;" width="17" height="17" viewBox="0 0 17 17"><rect x="4.7" y="4.3" width="7.1" height="6.8" fill="none" stroke="#444" stroke-width="1.2"/><path d="M6.4 2.4 L8.3 0.6 L10.2 2.4 M6.4 13 L8.3 14.8 L10.2 13 M3 5.8 L1.2 7.7 L3 9.6 M13.6 5.8 L15.4 7.7 L13.6 9.6" fill="none" stroke="#444" stroke-width="1.1"/></svg>
<div class="a" style="left:1534.60px;top:904.60px;width:1.40px;height:7.00px;background:#2b3346;"></div>
<svg class="a" style="left:15.00px;top:15.00px;" width="18" height="18" viewBox="0 0 18 18">
<circle cx="9.6" cy="9" r="7.7" fill="#ED6C47"/>
<path d="M9.6 1.3 A7.7 7.7 0 0 1 17.3 9 L9.6 9 Z" fill="#FF8F6B"/>
<path d="M17.3 9 A7.7 7.7 0 0 1 9.6 16.7 L9.6 9 Z" fill="#D35230"/>
<rect x="1" y="3.8" width="10.8" height="10.8" rx="1.2" fill="#C43E1C"/>
<text x="6.4" y="12.6" font-family="Liberation Sans, sans-serif" font-weight="700" font-size="9.5" text-anchor="middle" fill="#fff">P</text></svg>
<div class="t" style='left:56.30px;top:20.00px;font-size:11.88px;color:#3b3b3b;letter-spacing:-0.137px;'>Presentation1  -  PowerPoint</div>
<div class="a" style="left:569.50px;top:9.00px;width:413.50px;height:30.50px;background:#FAFAFA;border:1px solid #DADDE0;box-sizing:border-box;border-radius:4px;box-shadow:0 1px 2px rgba(0,0,0,.18);"></div>
<svg class="a" style="left:589.00px;top:15.00px;" width="16" height="16" viewBox="0 0 16 16"><circle cx="9.6" cy="6.2" r="4.6" fill="none" stroke="#555" stroke-width="1.2"/><line x1="6.3" y1="9.6" x2="1.6" y2="14.4" stroke="#555" stroke-width="1.3" stroke-linecap="round"/></svg>
<div class="t" style='left:618.00px;top:18.00px;font-size:12.88px;color:#666;letter-spacing:-0.199px;'>Search</div>
<svg class="a" style="left:1410.00px;top:18.00px;" width="12" height="12" viewBox="0 0 12 12"><line x1="1.4" y1="5.6" x2="10.7" y2="5.6" stroke="#222" stroke-width="1"/></svg>
<svg class="a" style="left:1458.00px;top:18.00px;" width="12" height="12" viewBox="0 0 12 12"><rect x="1.2" y="3.2" width="7.4" height="7.4" rx="1.6" fill="none" stroke="#222" stroke-width="1"/><path d="M3.4 1.2 H8.6 A2 2 0 0 1 10.6 3.2 V8.4" fill="none" stroke="#222" stroke-width="1"/></svg>
<svg class="a" style="left:1506.00px;top:18.00px;" width="12" height="12" viewBox="0 0 12 12"><path d="M1.2 1.2 L10.8 11 M10.8 1.2 L1.2 11" stroke="#222" stroke-width="1.1" fill="none"/></svg>
<div class="t" style='left:22.00px;top:58.00px;font-size:13.05px;color:#3a3a3a;letter-spacing:-0.679px;'>File</div>
<div class="t" style='left:67.50px;top:57.00px;font-size:14.21px;color:#222;letter-spacing:-0.308px;-webkit-text-stroke:0.55px #222;'>Home</div>
<div class="t" style='left:123.00px;top:58.00px;font-size:13.93px;color:#3a3a3a;letter-spacing:-0.170px;'>Insert</div>
<div class="t" style='left:176.00px;top:58.00px;font-size:13.83px;color:#3a3a3a;letter-spacing:-0.263px;'>Draw</div>
<div class="t" style='left:226.50px;top:58.00px;font-size:13.5px;color:#3a3a3a;letter-spacing:-0.205px;'>Design</div>
<div class="t" style='left:286.50px;top:58.00px;font-size:13.72px;color:#3a3a3a;letter-spacing:-0.163px;'>Transitions</div>
<div class="t" style='left:369.50px;top:57.00px;font-size:14.3px;color:#3a3a3a;letter-spacing:-0.192px;'>Animations</div>
<div class="t" style='left:456.50px;top:58.00px;font-size:13.52px;color:#3a3a3a;letter-spacing:-0.183px;'>Slide Show</div>
<div class="t" style='left:541.50px;top:58.00px;font-size:13.35px;color:#3a3a3a;letter-spacing:-0.210px;'>Record</div>
<div class="t" style='left:604.00px;top:58.00px;font-size:13.05px;color:#3a3a3a;letter-spacing:-0.258px;'>Review</div>
<div class="t" style='left:665.50px;top:58.00px;font-size:13.83px;color:#3a3a3a;letter-spacing:-0.242px;'>View</div>
<div class="t" style='left:714.00px;top:58.00px;font-size:13.63px;color:#3a3a3a;letter-spacing:-0.189px;'>Developer</div>
<div class="t" style='left:794.00px;top:57.00px;font-size:14.36px;color:#3a3a3a;letter-spacing:-0.198px;'>Add-ins</div>
<div class="t" style='left:860.00px;top:58.00px;font-size:13.7px;color:#3a3a3a;letter-spacing:-0.229px;'>Help</div>
<div class="t" style='left:907.00px;top:58.00px;font-size:13.05px;color:#3a3a3a;letter-spacing:-1.285px;'>FPPT</div>
<div class="t" style='left:956.00px;top:57.00px;font-size:14.05px;color:#3a3a3a;letter-spacing:-0.208px;'>Watermark</div>
<div class="t" style='left:1041.50px;top:58.00px;font-size:13.67px;color:#C43E1C;letter-spacing:-0.192px;'>Shape Format</div>
<div class="a" style="left:67.50px;top:73.40px;width:37.50px;height:2.60px;background:#C43E1C;border-radius:1.3px;"></div>
<div class="a" style="left:1175.20px;top:51.40px;width:75.40px;height:23.40px;background:#FEFEFE;border:1px solid #8a8a8a;box-sizing:border-box;border-radius:4px;"></div>
<svg class="a" style="left:1182.00px;top:56.50px;" width="14" height="14" viewBox="0 0 14 14"><circle cx="7" cy="6.8" r="5.4" fill="none" stroke="#333" stroke-width="1.1"/><circle cx="7" cy="6.8" r="3" fill="#333"/></svg>
<div class="t" style='left:1199.90px;top:57.00px;font-size:13.05px;color:#333;letter-spacing:-0.235px;'>Record</div>
<div class="a" style="left:1259.10px;top:51.40px;width:135.80px;height:23.40px;background:#FEFEFE;border:1px solid #8a8a8a;box-sizing:border-box;border-radius:4px;"></div>
<svg class="a" style="left:1266.00px;top:56.00px;" width="15" height="15" viewBox="0 0 15 15"><rect x="1" y="4" width="7.6" height="7.6" rx="1" fill="#444"/>
<text x="4.8" y="10.4" font-size="6.8" font-weight="700" text-anchor="middle" fill="#fff" font-family="Liberation Sans, sans-serif">T</text>
<circle cx="10" cy="3.4" r="1.9" fill="none" stroke="#444" stroke-width="1"/><path d="M9 6 H12.6 V10 A2.6 2.6 0 0 1 8.8 12.2" fill="none" stroke="#444" stroke-width="1"/>
<circle cx="5.6" cy="2.4" r="1.4" fill="#444"/></svg>
<div class="t" style='left:1283.60px;top:57.00px;font-size:13.51px;color:#333;letter-spacing:-0.169px;'>Present in Teams</div>
<div class="a" style="left:1403.10px;top:51.40px;width:31.60px;height:23.40px;background:#FEFEFE;border:1px solid #8a8a8a;box-sizing:border-box;border-radius:4px;"></div>
<svg class="a" style="left:1411.00px;top:57.00px;" width="14" height="13" viewBox="0 0 14 13"><path d="M1.6 1.4 H11.4 V8.2 H5.4 L3 10.8 V8.2 H1.6 Z" fill="none" stroke="#333" stroke-width="1.1" stroke-linejoin="round"/></svg>
<div class="a" style="left:1443.20px;top:51.40px;width:80.80px;height:23.40px;background:#C43E1C;border-radius:4px;"></div>
<svg class="a" style="left:1450.00px;top:56.50px;" width="14" height="14" viewBox="0 0 14 14"><path d="M5.6 3.4 H2.6 A1.2 1.2 0 0 0 1.4 4.6 V11 A1.2 1.2 0 0 0 2.6 12.2 H9.6 A1.2 1.2 0 0 0 10.8 11 V9.4" fill="none" stroke="#fff" stroke-width="1.1"/><path d="M8.6 1.6 L12.4 5 L8.6 8.4 V6.4 C6.4 6.3 5 7.2 4 9 C4.2 6 5.8 3.9 8.6 3.7 Z" fill="none" stroke="#fff" stroke-width="1.05" stroke-linejoin="round"/></svg>
<div class="t" style='left:1468.00px;top:57.00px;font-size:13.05px;color:#fff;letter-spacing:-0.458px;-webkit-text-stroke:0.5px #fff;'>Share</div>
<svg class="a" style="left:1512.10px;top:61.51px;" width="6.59" height="4.57" viewBox="0 0 6.59 4.57"><polyline points="1,1 3.30,3.57 5.59,1" fill="none" stroke="#fff" stroke-width="1.2" stroke-linecap="round" stroke-linejoin="round"/></svg>
<div class="a" style="left:8.00px;top:78.40px;width:1520.30px;height:132.00px;background:#FAFAFA;border-radius:8px;box-shadow:0 1.5px 3px rgba(0,0,0,.16),0 0 1.5px rgba(0,0,0,.14);"></div>
<div class="a" style="left:8.00px;top:78.40px;width:1520.30px;height:98.60px;background:#FEFEFE;border-radius:8px 8px 0 0;"></div>
<div class="a" style="left:8.00px;top:177.00px;width:1520.30px;height:1.00px;background:#DEDEDE;"></div>
<svg class="a" style="left:29.00px;top:86.00px;" width="29" height="32" viewBox="0 0 29 32"><path d="M2.2 5.2 H21.4 V28.6 H2.2 Z" fill="#FDF3E2" stroke="#EE9A2E" stroke-width="1.6" stroke-linejoin="round"/>
<path d="M5.4 8.2 V4.6 H8.6 A3.4 3.8 0 0 1 15 4.6 H18 V8.2 Z" fill="#F8F8F8" stroke="#8a8a8a" stroke-width="1"/>
<rect x="14.6" y="13.8" width="12.6" height="16.4" rx="1" fill="#FAFAFA" stroke="#555" stroke-width="1.2"/></svg>
<div class="t" style='left:27.60px;top:124.00px;font-size:11.07px;color:#333;letter-spacing:-0.427px;'>Paste</div>
<svg class="a" style="left:36.70px;top:141.51px;" width="6.59" height="4.57" viewBox="0 0 6.59 4.57"><polyline points="1,1 3.30,3.57 5.59,1" fill="none" stroke="#444" stroke-width="1.3" stroke-linecap="round" stroke-linejoin="round"/></svg>
<svg class="a" style="left:69.00px;top:85.00px;" width="13" height="18" viewBox="0 0 13 18"><path d="M3.6 1.4 L8.4 12.4 M9.4 1.4 L4.6 12.4" stroke="#555" stroke-width="1" fill="none" stroke-linecap="round"/>
<circle cx="3.4" cy="14.6" r="1.7" fill="none" stroke="#3A96DD" stroke-width="1.1"/><circle cx="9.6" cy="14.6" r="1.7" fill="none" stroke="#3A96DD" stroke-width="1.1"/></svg>
<svg class="a" style="left:66.00px;top:110.00px;" width="18" height="18" viewBox="0 0 18 18"><path d="M1.8 1.6 H7.4 V4.4 M1.8 1.6 V14 H5" fill="none" stroke="#555" stroke-width="1.1"/>
<path d="M5.6 4.4 H12.6 L16.4 8.2 V16.4 H5.6 Z" fill="#FAFAFA" stroke="#555" stroke-width="1.1" stroke-linejoin="round"/>
<path d="M12.4 4.6 V8.4 H16.2" fill="none" stroke="#555" stroke-width="1"/><path d="M8.6 11 H13.6 M8.6 13.4 H13.6" stroke="#777" stroke-width="1"/></svg>
<svg class="a" style="left:90.70px;top:117.31px;" width="6.59" height="4.57" viewBox="0 0 6.59 4.57"><polyline points="1,1 3.30,3.57 5.59,1" fill="none" stroke="#444" stroke-width="1.3" stroke-linecap="round" stroke-linejoin="round"/></svg>
<svg class="a" style="left:67.00px;top:136.00px;" width="18" height="17" viewBox="0 0 18 17"><path d="M10.4 6.6 L14.6 2.2 A1.2 1.2 0 0 1 16.2 3.8 L12.2 8.4" fill="#FAFAFA" stroke="#555" stroke-width="1.1"/>
<path d="M8.6 5 L13.6 10 L11.4 11.6 L7 7 Z" fill="#FAFAFA" stroke="#555" stroke-width="1"/>
<path d="M6.6 7.2 L11.2 12 L6.6 15.8 L1.2 10.6 Z" fill="#FCE4C8" stroke="#E07B1E" stroke-width="1.3" stroke-linejoin="round"/>
<path d="M3.6 12.8 L9 10" stroke="#E07B1E" stroke-width="1"/></svg>
<div class="t" style='left:29.60px;top:163.00px;font-size:11.05px;color:#444;letter-spacing:-0.144px;'>Clipboard</div>
<svg class="a" style="left:99.00px;top:164.00px;" width="9" height="9" viewBox="0 0 9 9"><path d="M0.5 7 V0.5 H7" fill="none" stroke="#4a4a4a" stroke-width="1" stroke-linecap="square"/><path d="M3.4 3.4 L7.5 7.5" stroke="#3a3a3a" stroke-width="1.1"/><path d="M7.5 3.2 V7.5 H3.2" fill="none" stroke="#333" stroke-width="1"/></svg>
<div class="a" style="left:110.00px;top:83.60px;width:2.00px;height:88.10px;background:#E9E9EA;"></div>
<svg class="a" style="left:123.00px;top:85.00px;" width="33" height="29" viewBox="0 0 33 29"><rect x="4.6" y="5.4" width="26" height="21" fill="#FAFAFA" stroke="#6a6a6a" stroke-width="1.3"/>
<rect x="6.8" y="7.6" width="21.6" height="16.6" fill="none" stroke="#8a8a8a" stroke-width="0.9"/>
<path d="M6.8 13.2 H28.4 M15.6 13.2 V24.2" stroke="#6a6a6a" stroke-width="1.1"/>
<path d="M8.4 0.6 V15 M1 7.8 H15.8" stroke="#FEFEFE" stroke-width="3.4"/>
<path d="M8.4 1 V14.6 M1.4 7.8 H15.4" stroke="#2C9A4B" stroke-width="1.3"/></svg>
<div class="t" style='left:128.60px;top:121.00px;font-size:11.73px;color:#333;letter-spacing:-0.286px;'>New</div>
<div class="t" style='left:121.00px;top:138.00px;font-size:11.8px;color:#333;letter-spacing:-0.160px;'>Slide</div>
<svg class="a" style="left:150.19px;top:141.36px;" width="6.43" height="4.48" viewBox="0 0 6.43 4.48"><polyline points="1,1 3.21,3.48 5.43,1" fill="none" stroke="#444" stroke-width="1.3" stroke-linecap="round" stroke-linejoin="round"/></svg>
<svg class="a" style="left:166.00px;top:86.00px;" width="17" height="14" viewBox="0 0 17 14"><rect x="0.8" y="0.8" width="15.4" height="12.4" rx="1" fill="#F2F2F2" stroke="#666" stroke-width="1.2"/>
<rect x="2.8" y="3" width="11.4" height="8" fill="none" stroke="#777" stroke-width="0.9"/><path d="M2.8 5.4 H14.2 M8.5 5.4 V11" stroke="#666" stroke-width="1"/></svg>
<div class="t" style='left:186.70px;top:88.00px;font-size:11.71px;color:#333;letter-spacing:-0.171px;'>Layout</div>
<svg class="a" style="left:225.39px;top:91.36px;" width="6.43" height="4.48" viewBox="0 0 6.43 4.48"><polyline points="1,1 3.21,3.48 5.43,1" fill="none" stroke="#444" stroke-width="1.3" stroke-linecap="round" stroke-linejoin="round"/></svg>
<svg class="a" style="left:166.00px;top:109.80px;" width="17" height="15.5" viewBox="0 0 17 15.5"><rect x="0.8" y="3" width="15.4" height="11.6" rx="1" fill="#F2F2F2" stroke="#666" stroke-width="1.2"/>
<rect x="5" y="5.6" width="9" height="6.6" fill="none" stroke="#888" stroke-width="0.9"/>
<path d="M0 0 H9 V9 H0 Z" fill="#FEFEFE"/>
<path d="M4.2 1 L1.4 3.8 L4.2 6.6 M1.6 3.8 H5.2 A3 3 0 0 1 8.2 6.8 V8.6" fill="none" stroke="#2E7FD1" stroke-width="1.2" stroke-linejoin="round" stroke-linecap="round"/></svg>
<div class="t" style='left:186.70px;top:115.00px;font-size:11.11px;color:#333;letter-spacing:-0.177px;'>Reset</div>
<svg class="a" style="left:166.00px;top:136.60px;" width="17" height="16.6" viewBox="0 0 17 16.6"><path d="M1 1.4 H16" stroke="#2C9A4B" stroke-width="1.6"/>
<rect x="0.9" y="4.4" width="15.2" height="11.4" rx="1" fill="#F2F2F2" stroke="#666" stroke-width="1.2"/>
<rect x="3.2" y="7" width="10.6" height="6.4" fill="none" stroke="#888" stroke-width="0.9"/></svg>
<div class="t" style='left:186.70px;top:140.00px;font-size:11.77px;color:#333;letter-spacing:-0.160px;'>Section</div>
<svg class="a" style="left:229.39px;top:143.16px;" width="6.43" height="4.48" viewBox="0 0 6.43 4.48"><polyline points="1,1 3.21,3.48 5.43,1" fill="none" stroke="#444" stroke-width="1.3" stroke-linecap="round" stroke-linejoin="round"/></svg>
<div class="t" style='left:168.00px;top:164.00px;font-size:10.17px;color:#444;letter-spacing:-0.135px;'>Slides</div>
<div class="a" style="left:252.00px;top:83.60px;width:2.00px;height:88.10px;background:#E9E9EA;"></div>
<div class="a" style="left:261.50px;top:89.50px;width:166.70px;height:24.10px;background:#fff;border:1px solid #9a9a9a;box-sizing:border-box;border-radius:4px;"></div>
<div class="t" style='left:264.00px;top:97.00px;font-size:12.3px;color:#333;letter-spacing:-0.140px;'>Calibri (Body)</div>
<svg class="a" style="left:419.39px;top:99.76px;" width="6.43" height="4.48" viewBox="0 0 6.43 4.48"><polyline points="1,1 3.21,3.48 5.43,1" fill="none" stroke="#444" stroke-width="1.3" stroke-linecap="round" stroke-linejoin="round"/></svg>
<div class="a" style="left:430.80px;top:89.50px;width:44.70px;height:24.10px;background:#fff;border:1px solid #9a9a9a;box-sizing:border-box;border-radius:4px;"></div>
<div class="t" style='left:433.60px;top:97.00px;font-size:11.7px;color:#333;letter-spacing:-0.822px;'>18</div>
<svg class="a" style="left:466.29px;top:99.76px;" width="6.43" height="4.48" viewBox="0 0 6.43 4.48"><polyline points="1,1 3.21,3.48 5.43,1" fill="none" stroke="#444" stroke-width="1.3" stroke-linecap="round" stroke-linejoin="round"/></svg>
<div class="t" style='left:483.00px;top:93.00px;font-size:16.5px;color:#444;'>A</div>
<svg class="a" style="left:493.60px;top:93.00px;" width="6" height="5" viewBox="0 0 6 5"><polyline points="0.8,3.6 2.8,1.2 4.8,3.6" fill="none" stroke="#2E7FD1" stroke-width="1.1"/></svg>
<div class="t" style='left:510.00px;top:95.00px;font-size:14px;color:#444;'>A</div>
<svg class="a" style="left:518.60px;top:93.00px;" width="6" height="5" viewBox="0 0 6 5"><polyline points="0.8,1.2 2.8,3.6 4.8,1.2" fill="none" stroke="#2E7FD1" stroke-width="1.1"/></svg>
<div class="a" style="left:529.00px;top:90.00px;width:2.00px;height:23.00px;background:#E9E9EA;"></div>
<div class="t" style='left:535.50px;top:93.00px;font-size:15.5px;color:#444;'>A</div>
<svg class="a" style="left:541.00px;top:99.00px;" width="12" height="10" viewBox="0 0 12 10"><path d="M5.6 1 L10.4 4.2 L6.4 8.8 L1.6 5.6 Z" fill="#F2D8F4" stroke="#B146C2" stroke-width="1.1" stroke-linejoin="round"/><path d="M3.4 3.4 L8.2 6.6" stroke="#B146C2" stroke-width="0.9"/></svg>
<div class="t" style='left:270.00px;top:126.00px;font-size:13.5px;color:#333;font-weight:700;'>B</div>
<div class="t" style='left:296.60px;top:126.00px;font-size:14px;color:#333;font-family:"Liberation Serif", serif;font-style:italic;'>I</div>
<div class="t" style='left:320.40px;top:127.00px;font-size:12.6px;color:#333;text-decoration:underline;text-underline-offset:2px;'>U</div>
<div class="t" style='left:345.80px;top:127.00px;font-size:13.5px;color:#333;text-shadow:1px 1px 0 #bbb;'>S</div>
<div class="t" style='left:368.80px;top:128.00px;font-size:12.8px;color:#444;letter-spacing:0.365px;text-decoration:line-through;'>ab</div>
<div class="t" style='left:394.00px;top:123.00px;font-size:11.61px;color:#444;letter-spacing:0.375px;'>AV</div>
<svg class="a" style="left:393.50px;top:135.00px;" width="16" height="6" viewBox="0 0 16 6"><path d="M1 3 H15 M3.4 0.8 L1 3 L3.4 5.2 M12.6 0.8 L15 3 L12.6 5.2" fill="none" stroke="#2E7FD1" stroke-width="1.05"/></svg>
<svg class="a" style="left:415.59px;top:132.16px;" width="6.43" height="4.48" viewBox="0 0 6.43 4.48"><polyline points="1,1 3.21,3.48 5.43,1" fill="none" stroke="#444" stroke-width="1.3" stroke-linecap="round" stroke-linejoin="round"/></svg>
<div class="t" style='left:435.70px;top:127.00px;font-size:13.16px;color:#444;letter-spacing:-0.392px;'>Aa</div>
<svg class="a" style="left:457.19px;top:132.16px;" width="6.43" height="4.48" viewBox="0 0 6.43 4.48"><polyline points="1,1 3.21,3.48 5.43,1" fill="none" stroke="#444" stroke-width="1.3" stroke-linecap="round" stroke-linejoin="round"/></svg>
<div class="a" style="left:473.00px;top:121.70px;width:2.00px;height:23.30px;background:#E9E9EA;"></div>
<svg class="a" style="left:479.00px;top:124.00px;" width="17" height="18.5" viewBox="0 0 17 18.5"><path d="M4.4 10.2 L11.4 2.4 A1.5 1.5 0 0 1 13.8 4.4 L7.4 12.4 L4 12.8 Z" fill="none" stroke="#555" stroke-width="1.1" stroke-linejoin="round"/>
<path d="M3.8 12.9 L2.2 14.6 H5.6 L7.2 12.6" fill="#555" stroke="#555" stroke-width="0.6"/>
<rect x="0.4" y="14.2" width="16" height="3.8" fill="#FFF100"/></svg>
<svg class="a" style="left:502.79px;top:132.16px;" width="6.43" height="4.48" viewBox="0 0 6.43 4.48"><polyline points="1,1 3.21,3.48 5.43,1" fill="none" stroke="#444" stroke-width="1.3" stroke-linecap="round" stroke-linejoin="round"/></svg>
<div class="t" style='left:521.40px;top:123.00px;font-size:16.4px;color:#444;'>A</div>
<div class="a" style="left:520.30px;top:138.20px;width:15.50px;height:3.60px;background:#C5D5EA;"></div>
<svg class="a" style="left:543.49px;top:132.16px;" width="6.43" height="4.48" viewBox="0 0 6.43 4.48"><polyline points="1,1 3.21,3.48 5.43,1" fill="none" stroke="#444" stroke-width="1.3" stroke-linecap="round" stroke-linejoin="round"/></svg>
<div class="t" style='left:389.60px;top:164.00px;font-size:10.2px;color:#444;letter-spacing:-0.166px;'>Font</div>
<svg class="a" style="left:551.00px;top:164.00px;" width="9" height="9" viewBox="0 0 9 9"><path d="M0.5 7 V0.5 H7" fill="none" stroke="#4a4a4a" stroke-width="1" stroke-linecap="square"/><path d="M3.4 3.4 L7.5 7.5" stroke="#3a3a3a" stroke-width="1.1"/><path d="M7.5 3.2 V7.5 H3.2" fill="none" stroke="#333" stroke-width="1"/></svg>
<div class="a" style="left:562.00px;top:83.60px;width:2.00px;height:88.10px;background:#E9E9EA;"></div>
<svg class="a" style="left:574.50px;top:93.60px;" width="17" height="15.6" viewBox="0 0 17 15.6"><rect x="0.6" y="0.6" width="2.6" height="2.6" fill="#2E7FD1"/><rect x="0.6" y="6.4" width="2.6" height="2.6" fill="#2E7FD1"/><rect x="0.6" y="12.2" width="2.6" height="2.6" fill="#2E7FD1"/>
<path d="M5.6 1.9 H16 M5.6 7.7 H16 M5.6 13.5 H16" stroke="#666" stroke-width="1.3"/></svg>
<svg class="a" style="left:598.59px;top:99.76px;" width="6.43" height="4.48" viewBox="0 0 6.43 4.48"><polyline points="1,1 3.21,3.48 5.43,1" fill="none" stroke="#444" stroke-width="1.3" stroke-linecap="round" stroke-linejoin="round"/></svg>
<svg class="a" style="left:615.00px;top:92.60px;" width="17.4" height="17" viewBox="0 0 17.4 17"><text x="0.2" y="5.2" font-size="5.6" font-weight="700" fill="#2E7FD1" font-family="Liberation Sans, sans-serif">1</text>
<text x="0.2" y="11" font-size="5.6" font-weight="700" fill="#2E7FD1" font-family="Liberation Sans, sans-serif">2</text>
<text x="0.2" y="16.8" font-size="5.6" font-weight="700" fill="#2E7FD1" font-family="Liberation Sans, sans-serif">3</text>
<path d="M6 2.9 H16.4 M6 8.7 H16.4 M6 14.5 H16.4" stroke="#666" stroke-width="1.3"/></svg>
<svg class="a" style="left:639.39px;top:99.76px;" width="6.43" height="4.48" viewBox="0 0 6.43 4.48"><polyline points="1,1 3.21,3.48 5.43,1" fill="none" stroke="#444" stroke-width="1.3" stroke-linecap="round" stroke-linejoin="round"/></svg>
<svg class="a" style="left:657.60px;top:93.60px;" width="15" height="15.6" viewBox="0 0 15 15.6"><path d="M0.6 1.9 H14.4 M7.4 7.7 H14.4 M0.6 13.5 H14.4" stroke="#B9B9B9" stroke-width="1.3"/><path d="M5.6 7.7 H0.8 M2.8 5.6 L0.8 7.7 L2.8 9.8" fill="none" stroke="#B9B9B9" stroke-width="1"/></svg>
<svg class="a" style="left:682.40px;top:93.60px;" width="15" height="15.6" viewBox="0 0 15 15.6"><path d="M0.6 1.9 H14.4 M7.4 7.7 H14.4 M0.6 13.5 H14.4" stroke="#B9B9B9" stroke-width="1.3"/><path d="M0.6 7.7 H5.4 M3.4 5.6 L5.4 7.7 L3.4 9.8" fill="none" stroke="#B9B9B9" stroke-width="1"/></svg>
<svg class="a" style="left:708.00px;top:93.00px;" width="17.4" height="17" viewBox="0 0 17.4 17"><path d="M2.6 1.6 V15.4 M0.6 3.8 L2.6 1.4 L4.6 3.8 M0.6 13.2 L2.6 15.6 L4.6 13.2" fill="none" stroke="#2E7FD1" stroke-width="1.2"/>
<path d="M7.4 2.4 H16.8 M7.4 6.5 H16.8 M7.4 10.6 H16.8 M7.4 14.7 H16.8" stroke="#666" stroke-width="1.3"/></svg>
<svg class="a" style="left:730.19px;top:99.76px;" width="6.43" height="4.48" viewBox="0 0 6.43 4.48"><polyline points="1,1 3.21,3.48 5.43,1" fill="none" stroke="#444" stroke-width="1.3" stroke-linecap="round" stroke-linejoin="round"/></svg>
<svg class="a" style="left:751.00px;top:85.00px;" width="15.6" height="17.6" viewBox="0 0 15.6 17.6"><path d="M3.2 1 V15.6 M0.8 13 L3.2 15.8 L5.6 13" fill="none" stroke="#444" stroke-width="1.2"/>
<text x="6.6" y="7.4" font-size="8.4" fill="#2E7FD1" font-family="Liberation Sans, sans-serif">A</text>
<path d="M9.8 9 V15.6 M7.8 13.4 L9.8 15.8 L11.8 13.4" fill="none" stroke="#444" stroke-width="1.1"/></svg>
<svg class="a" style="left:771.59px;top:91.56px;" width="6.43" height="4.48" viewBox="0 0 6.43 4.48"><polyline points="1,1 3.21,3.48 5.43,1" fill="none" stroke="#444" stroke-width="1.3" stroke-linecap="round" stroke-linejoin="round"/></svg>
<svg class="a" style="left:749.00px;top:111.00px;" width="18" height="15.6" viewBox="0 0 18 15.6"><path d="M3.6 3.4 H1 V12.4 H3.6 M14.4 3.4 H17 V12.4 H14.4" fill="none" stroke="#555" stroke-width="1.2"/>
<path d="M4.6 7.9 H13.4" stroke="#555" stroke-width="1.1"/>
<path d="M9 0.8 V5.6 M7 2.8 L9 0.6 L11 2.8 M9 10.2 V15 M7 13 L9 15.2 L11 13" fill="none" stroke="#2E7FD1" stroke-width="1.1"/></svg>
<svg class="a" style="left:771.59px;top:117.36px;" width="6.43" height="4.48" viewBox="0 0 6.43 4.48"><polyline points="1,1 3.21,3.48 5.43,1" fill="none" stroke="#444" stroke-width="1.3" stroke-linecap="round" stroke-linejoin="round"/></svg>
<svg class="a" style="left:749.00px;top:137.60px;" width="18" height="14.4" viewBox="0 0 18 14.4"><path d="M0.8 1 H9.4 L13.2 5 L9.4 9 H0.8 L4 5 Z" fill="#3AA655" stroke="#2C8A45" stroke-width="0.8"/>
<rect x="7.4" y="6.4" width="9.6" height="7.2" rx="0.8" fill="#F2F2F2" stroke="#555" stroke-width="1"/><path d="M9.2 8.8 H15.2 M9.2 11 H15.2" stroke="#666" stroke-width="0.9"/></svg>
<svg class="a" style="left:771.59px;top:143.16px;" width="6.43" height="4.48" viewBox="0 0 6.43 4.48"><polyline points="1,1 3.21,3.48 5.43,1" fill="none" stroke="#444" stroke-width="1.3" stroke-linecap="round" stroke-linejoin="round"/></svg>
<svg class="a" style="left:576.20px;top:126.20px;" width="14.4" height="14.4" viewBox="0 0 14.4 14.4"><line x1="0.0" y1="0.8" x2="14.4" y2="0.8" stroke="#666" stroke-width="1.3"/><line x1="0.0" y1="5.0" x2="8.4" y2="5.0" stroke="#666" stroke-width="1.3"/><line x1="0.0" y1="9.2" x2="14.4" y2="9.2" stroke="#666" stroke-width="1.3"/><line x1="0.0" y1="13.4" x2="8.4" y2="13.4" stroke="#666" stroke-width="1.3"/></svg>
<div class="a" style="left:597.20px;top:121.60px;width:23.80px;height:23.80px;background:#E9E9E9;border:1px solid #8d8d8d;box-sizing:border-box;border-radius:4px;"></div>
<svg class="a" style="left:601.90px;top:126.20px;" width="14.4" height="14.4" viewBox="0 0 14.4 14.4"><line x1="0.0" y1="0.8" x2="14.4" y2="0.8" stroke="#666" stroke-width="1.3"/><line x1="3.0" y1="5.0" x2="11.4" y2="5.0" stroke="#666" stroke-width="1.3"/><line x1="0.0" y1="9.2" x2="14.4" y2="9.2" stroke="#666" stroke-width="1.3"/><line x1="3.0" y1="13.4" x2="11.4" y2="13.4" stroke="#666" stroke-width="1.3"/></svg>
<svg class="a" style="left:627.40px;top:126.20px;" width="14.4" height="14.4" viewBox="0 0 14.4 14.4"><line x1="0.0" y1="0.8" x2="14.4" y2="0.8" stroke="#666" stroke-width="1.3"/><line x1="6.0" y1="5.0" x2="14.4" y2="5.0" stroke="#666" stroke-width="1.3"/><line x1="0.0" y1="9.2" x2="14.4" y2="9.2" stroke="#666" stroke-width="1.3"/><line x1="6.0" y1="13.4" x2="14.4" y2="13.4" stroke="#666" stroke-width="1.3"/></svg>
<svg class="a" style="left:652.80px;top:126.20px;" width="14.4" height="14.4" viewBox="0 0 14.4 14.4"><line x1="0.0" y1="0.8" x2="14.4" y2="0.8" stroke="#666" stroke-width="1.3"/><line x1="0.0" y1="5.0" x2="14.4" y2="5.0" stroke="#666" stroke-width="1.3"/><line x1="0.0" y1="9.2" x2="14.4" y2="9.2" stroke="#666" stroke-width="1.3"/><line x1="0.0" y1="13.4" x2="14.4" y2="13.4" stroke="#666" stroke-width="1.3"/></svg>
<div class="a" style="left:673.00px;top:121.60px;width:2.00px;height:23.80px;background:#E9E9EA;"></div>
<svg class="a" style="left:681.40px;top:128.60px;" width="13.6" height="10" viewBox="0 0 13.6 10"><path d="M0.4 1 H5.8 M0.4 4.6 H5.8 M0.4 8.2 H5.8 M7.6 1 H13 M7.6 4.6 H13 M7.6 8.2 H13" stroke="#2E8FE0" stroke-width="1.5"/></svg>
<svg class="a" style="left:701.79px;top:132.16px;" width="6.43" height="4.48" viewBox="0 0 6.43 4.48"><polyline points="1,1 3.21,3.48 5.43,1" fill="none" stroke="#444" stroke-width="1.3" stroke-linecap="round" stroke-linejoin="round"/></svg>
<div class="t" style='left:645.80px;top:163.00px;font-size:10.72px;color:#444;letter-spacing:-0.152px;'>Paragraph</div>
<svg class="a" style="left:781.00px;top:164.00px;" width="9" height="9" viewBox="0 0 9 9"><path d="M0.5 7 V0.5 H7" fill="none" stroke="#4a4a4a" stroke-width="1" stroke-linecap="square"/><path d="M3.4 3.4 L7.5 7.5" stroke="#3a3a3a" stroke-width="1.1"/><path d="M7.5 3.2 V7.5 H3.2" fill="none" stroke="#333" stroke-width="1"/></svg>
<div class="a" style="left:793.00px;top:83.60px;width:2.00px;height:88.10px;background:#E9E9EA;"></div>
<div class="a" style="left:802.50px;top:90.00px;width:132.10px;height:61.80px;background:#FDFDFD;border:1px solid #D2D2D2;box-sizing:border-box;border-radius:5px;"></div>
<div class="a" style="left:920.40px;top:90.50px;width:1.00px;height:60.50px;background:#DADADA;"></div>
<div class="a" style="left:921.00px;top:110.00px;width:13.00px;height:1.00px;background:#DADADA;"></div>
<div class="a" style="left:921.00px;top:129.20px;width:13.00px;height:1.00px;background:#DADADA;"></div>
<svg class="a" style="left:923.50px;top:96.50px;" width="8" height="6" viewBox="0 0 8 6"><polyline points="1.4,4.2 4,1.6 6.6,4.2" fill="none" stroke="#BDBDBD" stroke-width="1.1"/></svg>
<svg class="a" style="left:924.47px;top:118.21px;" width="6.26" height="4.39" viewBox="0 0 6.26 4.39"><polyline points="1,1 3.13,3.39 5.26,1" fill="none" stroke="#444" stroke-width="1.3" stroke-linecap="round" stroke-linejoin="round"/></svg>
<svg class="a" style="left:923.40px;top:136.00px;" width="9" height="9" viewBox="0 0 9 9"><path d="M1.2 1.6 H7.6" stroke="#444" stroke-width="1.1"/><polyline points="1.6,4.4 4.4,7 7.2,4.4" fill="none" stroke="#444" stroke-width="1.1"/></svg>
<svg class="a" style="left:802.00px;top:90.00px;" width="120" height="62" viewBox="0 0 120 62">
<rect x="5.6" y="5.8" width="12.4" height="11" stroke="#505050" stroke-width="1.3" fill="none"/><text x="11.8" y="14.8" font-size="8.8" font-weight="700" fill="#3A96DD" text-anchor="middle" font-family="Liberation Sans, sans-serif">A</text>
<circle cx="5.4" cy="5.8" r="1.6" fill="#3A96DD"/><circle cx="18.2" cy="5.8" r="1.6" fill="#3A96DD"/><circle cx="5.4" cy="16.8" r="1.6" fill="#3A96DD"/><circle cx="18.2" cy="16.8" r="1.6" fill="#3A96DD"/>
<path d="M24 4.6 L38 17.6" stroke="#505050" stroke-width="1.3" fill="none"/>
<path d="M43 4.6 L57.4 17.6 M57.6 13.6 V17.8 H53.4" stroke="#505050" stroke-width="1.3" fill="none"/>
<rect x="62" y="5.4" width="15" height="11.6" stroke="#505050" stroke-width="1.3" fill="none"/>
<ellipse cx="88.6" cy="11.3" rx="7.6" ry="5.9" stroke="#505050" stroke-width="1.3" fill="none"/>
<rect x="100.6" y="5.4" width="14.6" height="11.6" rx="2.6" stroke="#505050" stroke-width="1.3" fill="none"/>
<path d="M11.6 24.4 L18.4 37.4 H4.8 Z" stroke="#505050" stroke-width="1.3" fill="none"/>
<path d="M24 25 H30.6 V37 H38.4" stroke="#505050" stroke-width="1.3" fill="none"/>
<path d="M43 25 H49.6 V36 H57 M55 33.8 L57.4 36 L55 38.2" stroke="#505050" stroke-width="1.3" fill="none"/>
<path d="M62 28.4 H69.6 V24.8 L76.6 31 L69.6 37.2 V33.6 H62 Z" stroke="#505050" stroke-width="1.3" fill="none"/>
<path d="M85.4 24.6 H91.6 V31.4 H95 L88.5 38 L82 31.4 H85.4 Z" stroke="#505050" stroke-width="1.3" fill="none"/>
<path d="M101 27.6 A3 3 0 0 1 104 24.6 H112.6 C111 26.6 111.4 29.6 115.2 29.8 V34.4 A3 3 0 0 1 112.2 37.4 H101 Z" stroke="#505050" stroke-width="1.3" fill="none"/>
<path d="M5.1 42.3 C4.1 48.7 7.5 52.6 12.4 48.7 C17.3 44.8 18.3 41.9 15.3 42.8 C10.5 44.8 5.6 54.5 10.5 55.5 C14.4 56.5 18.3 51.6 19.3 53.6 C20.2 56.5 16.3 57.5 15.3 57.5" stroke="#505050" stroke-width="1.3" fill="none"/>
<path d="M23.6 44.6 C32 45 37 50 37.6 57.4" stroke="#505050" stroke-width="1.3" fill="none"/>
<path d="M43 50.6 C45.6 44 48.6 44 51 50 C53.4 56.4 55.6 57.4 57.8 56.6" stroke="#505050" stroke-width="1.3" fill="none"/>
<path d="M71.6 43.4 C68.6 43.4 68.4 44.6 68.4 46.6 C68.4 48.6 68 50 66.4 50.2 C68 50.4 68.4 51.8 68.4 53.8 C68.4 55.8 68.6 57 71.6 57" stroke="#505050" stroke-width="1.3" fill="none"/>
<path d="M86.4 43.4 C89.4 43.4 89.6 44.6 89.6 46.6 C89.6 48.6 90 50 91.6 50.2 C90 50.4 89.6 51.8 89.6 53.8 C89.6 55.8 89.4 57 86.4 57" stroke="#505050" stroke-width="1.3" fill="none"/>
<path d="M101 43.6 L115.4 57.6" stroke="#505050" stroke-width="1.3" fill="none"/></svg>
<svg class="a" style="left:948.00px;top:86.00px;" width="31" height="30" viewBox="0 0 31 30"><rect x="5.6" y="5.2" width="19.2" height="19.2" fill="#FBDDA6" stroke="#E8912D" stroke-width="1.2"/>
<rect x="1.4" y="1.3" width="11.2" height="10.6" fill="#FAFAFA" stroke="#6a6a6a" stroke-width="1.1"/>
<rect x="17.8" y="17.7" width="10.8" height="10.5" fill="#FAFAFA" stroke="#6a6a6a" stroke-width="1.1"/></svg>
<div class="t" style='left:942.20px;top:122.00px;font-size:12.02px;color:#333;letter-spacing:-0.174px;'>Arrange</div>
<svg class="a" style="left:959.39px;top:140.16px;" width="6.43" height="4.48" viewBox="0 0 6.43 4.48"><polyline points="1,1 3.21,3.48 5.43,1" fill="none" stroke="#444" stroke-width="1.3" stroke-linecap="round" stroke-linejoin="round"/></svg>
<svg class="a" style="left:995.00px;top:86.00px;" width="34" height="31" viewBox="0 0 34 31"><path d="M22.8 28.4 H3.4 A2.2 2.2 0 0 1 1.2 26.2 V3.2 A2.2 2.2 0 0 1 3.4 1 H26.8 A2.2 2.2 0 0 1 29 3.2 V10" fill="#FAFAFA" stroke="#666" stroke-width="1.2"/>
<path d="M20.4 22.4 L30.4 11.2 A1.3 1.3 0 0 1 32.6 12.8 L22.8 24.6" fill="#FAFAFA" stroke="#555" stroke-width="1.1"/>
<path d="M20.2 22 L23.2 24.8 C22.6 28.4 17.4 30.2 12.6 29.4 C15.6 28 15.4 23.6 20.2 22 Z" fill="#6FB3EE" stroke="#2E7FD1" stroke-width="1"/></svg>
<div class="t" style='left:996.70px;top:123.00px;font-size:11.59px;color:#333;letter-spacing:-0.181px;'>Quick</div>
<div class="t" style='left:990.00px;top:138.00px;font-size:11.07px;color:#333;letter-spacing:-0.150px;'>Styles</div>
<svg class="a" style="left:1022.99px;top:141.36px;" width="6.43" height="4.48" viewBox="0 0 6.43 4.48"><polyline points="1,1 3.21,3.48 5.43,1" fill="none" stroke="#444" stroke-width="1.3" stroke-linecap="round" stroke-linejoin="round"/></svg>
<svg class="a" style="left:1039.00px;top:85.00px;" width="17" height="17" viewBox="0 0 17 17"><path d="M6.4 2.6 L12.2 8.2 L7.6 12.4 L2.2 7 Z" fill="#FAFAFA" stroke="#555" stroke-width="1.1" stroke-linejoin="round"/>
<path d="M6.2 2.8 V0.8" stroke="#555" stroke-width="1"/><path d="M12.6 6.4 C14.2 7.4 14.6 9.4 13.6 11" fill="none" stroke="#2E7FD1" stroke-width="1.3"/>
<rect x="0.4" y="13" width="16" height="3.4" fill="#F4A360"/></svg>
<div class="t" style='left:1059.80px;top:89.00px;font-size:11.57px;color:#333;letter-spacing:-0.139px;'>Shape Fill</div>
<svg class="a" style="left:1113.99px;top:91.36px;" width="6.43" height="4.48" viewBox="0 0 6.43 4.48"><polyline points="1,1 3.21,3.48 5.43,1" fill="none" stroke="#444" stroke-width="1.3" stroke-linecap="round" stroke-linejoin="round"/></svg>
<svg class="a" style="left:1039.00px;top:110.60px;" width="17" height="17" viewBox="0 0 17 17"><path d="M1.4 10.4 V2.2 H11.4" fill="none" stroke="#555" stroke-width="1.1"/><path d="M1.4 10.4 H5" stroke="#555" stroke-width="1.1"/>
<path d="M6.6 9.4 L13 2.4 A1.4 1.4 0 0 1 15.2 4.2 L8.8 11.2 L5.8 12 Z" fill="#DCEBFA" stroke="#2E7FD1" stroke-width="1.1" stroke-linejoin="round"/>
<rect x="0.4" y="13" width="16" height="3.4" fill="#F1695B"/></svg>
<div class="t" style='left:1059.80px;top:115.00px;font-size:11.89px;color:#333;letter-spacing:-0.153px;'>Shape Outline</div>
<svg class="a" style="left:1136.79px;top:117.36px;" width="6.43" height="4.48" viewBox="0 0 6.43 4.48"><polyline points="1,1 3.21,3.48 5.43,1" fill="none" stroke="#444" stroke-width="1.3" stroke-linecap="round" stroke-linejoin="round"/></svg>
<svg class="a" style="left:1039.00px;top:138.40px;" width="17.4" height="13" viewBox="0 0 17.4 13"><path d="M5.4 1 H15.4 A1 1 0 0 1 16.2 2.4 L12.2 9.4 H1.4 L5.4 1 Z" fill="#F4F4F4" stroke="#444" stroke-width="1.1" stroke-linejoin="round"/>
<path d="M1.2 9.4 H12.2 L16.2 2.6 V5 L12.6 12 H1.8 Z" fill="#555" stroke="#444" stroke-width="0.8" stroke-linejoin="round"/></svg>
<div class="t" style='left:1059.80px;top:140.00px;font-size:11.63px;color:#333;letter-spacing:-0.147px;'>Shape Effects</div>
<svg class="a" style="left:1133.69px;top:143.36px;" width="6.43" height="4.48" viewBox="0 0 6.43 4.48"><polyline points="1,1 3.21,3.48 5.43,1" fill="none" stroke="#444" stroke-width="1.3" stroke-linecap="round" stroke-linejoin="round"/></svg>
<div class="t" style='left:948.30px;top:163.00px;font-size:10.66px;color:#444;letter-spacing:-0.159px;'>Drawing</div>
<svg class="a" style="left:1146.00px;top:164.00px;" width="9" height="9" viewBox="0 0 9 9"><path d="M0.5 7 V0.5 H7" fill="none" stroke="#4a4a4a" stroke-width="1" stroke-linecap="square"/><path d="M3.4 3.4 L7.5 7.5" stroke="#3a3a3a" stroke-width="1.1"/><path d="M7.5 3.2 V7.5 H3.2" fill="none" stroke="#333" stroke-width="1"/></svg>
<div class="a" style="left:1158.00px;top:83.60px;width:2.00px;height:88.10px;background:#E9E9EA;"></div>
<svg class="a" style="left:1170.00px;top:85.00px;" width="17" height="17" viewBox="0 0 17 17"><circle cx="10.4" cy="6.4" r="5" fill="none" stroke="#444" stroke-width="1.15"/><path d="M6.8 10 L1.2 15.8" stroke="#444" stroke-width="1.3" stroke-linecap="round"/></svg>
<div class="t" style='left:1191.00px;top:89.00px;font-size:11.07px;color:#333;letter-spacing:-0.177px;'>Find</div>
<svg class="a" style="left:1169.00px;top:111.00px;" width="17" height="17" viewBox="0 0 17 17"><text x="8" y="7.6" font-size="8.6" fill="#B146C2" font-family="Liberation Sans, sans-serif">b</text>
<text x="11" y="15.6" font-size="8.6" fill="#2E7FD1" font-family="Liberation Sans, sans-serif">c</text>
<path d="M5.4 3.4 C1.4 4 0.4 9 4 10.8 H9.4 M7.2 8.4 L9.6 10.8 L7.2 13.2" fill="none" stroke="#2E7FD1" stroke-width="1.1"/></svg>
<div class="t" style='left:1191.00px;top:115.00px;font-size:11.57px;color:#333;letter-spacing:-0.172px;'>Replace</div>
<svg class="a" style="left:1245.29px;top:117.36px;" width="6.43" height="4.48" viewBox="0 0 6.43 4.48"><polyline points="1,1 3.21,3.48 5.43,1" fill="none" stroke="#444" stroke-width="1.3" stroke-linecap="round" stroke-linejoin="round"/></svg>
<svg class="a" style="left:1171.00px;top:137.00px;" width="13" height="16" viewBox="0 0 13 16"><path d="M1.6 1.2 V12.6 L4.6 9.8 L6.8 14.6 L8.8 13.6 L6.6 9 H10.6 Z" fill="#FAFAFA" stroke="#444" stroke-width="1.1" stroke-linejoin="round"/></svg>
<div class="t" style='left:1191.00px;top:139.00px;font-size:11.76px;color:#333;letter-spacing:-0.159px;'>Select</div>
<svg class="a" style="left:1225.79px;top:143.36px;" width="6.43" height="4.48" viewBox="0 0 6.43 4.48"><polyline points="1,1 3.21,3.48 5.43,1" fill="none" stroke="#444" stroke-width="1.3" stroke-linecap="round" stroke-linejoin="round"/></svg>
<div class="t" style='left:1195.20px;top:163.00px;font-size:10.67px;color:#444;letter-spacing:-0.132px;'>Editing</div>
<div class="a" style="left:1265.00px;top:83.60px;width:2.00px;height:88.10px;background:#E9E9EA;"></div>
<svg class="a" style="left:1283.00px;top:85.00px;" width="22" height="32" viewBox="0 0 22 32"><rect x="6" y="1" width="10" height="19" rx="5" fill="#7DB9EC" stroke="#2B6CB3" stroke-width="1.1"/>
<path d="M1.6 12.6 V14.4 A9.4 9.4 0 0 0 20.4 14.4 V12.6 M11 24 V30.6" fill="none" stroke="#444" stroke-width="1.2"/></svg>
<div class="t" style='left:1275.60px;top:123.00px;font-size:12.3px;color:#333;letter-spacing:-0.097px;'>Dictate</div>
<svg class="a" style="left:1290.59px;top:141.36px;" width="6.43" height="4.48" viewBox="0 0 6.43 4.48"><polyline points="1,1 3.21,3.48 5.43,1" fill="none" stroke="#444" stroke-width="1.3" stroke-linecap="round" stroke-linejoin="round"/></svg>
<div class="t" style='left:1281.90px;top:164.00px;font-size:10.23px;color:#444;letter-spacing:-0.152px;'>Voice</div>
<div class="a" style="left:1322.00px;top:83.60px;width:2.00px;height:88.10px;background:#E9E9EA;"></div>
<svg class="a" style="left:1341.00px;top:84.00px;" width="32" height="29" viewBox="0 0 32 29"><rect x="6" y="7" width="24.6" height="20.6" fill="#F4F4F4" stroke="#666" stroke-width="1.3"/>
<rect x="8.2" y="9.2" width="20.2" height="16.2" fill="none" stroke="#8a8a8a" stroke-width="0.9"/>
<path d="M8.2 14.6 H28.4 M21 14.6 V25.4" stroke="#666" stroke-width="1.1"/>
<path d="M7.6 0.8 H14.2 L10.8 7.6 H15 L3.4 20.6 L6.4 11.4 H2 Z" fill="#FBC15E" stroke="#E8812D" stroke-width="1.1" stroke-linejoin="round"/></svg>
<div class="t" style='left:1334.20px;top:122.00px;font-size:11.91px;color:#333;letter-spacing:-0.166px;'>Designer</div>
<div class="t" style='left:1336.00px;top:163.00px;font-size:10.61px;color:#444;letter-spacing:-0.148px;'>Designer</div>
<div class="a" style="left:1389.00px;top:83.60px;width:2.00px;height:88.10px;background:#E9E9EA;"></div>
<svg class="a" style="left:1507.00px;top:160.00px;" width="13" height="9" viewBox="0 0 13 9"><polyline points="1.4,1.6 6.4,6.6 11.4,1.6" fill="none" stroke="#333" stroke-width="1.2"/></svg>
<div class="t" style='left:16.40px;top:189.00px;font-size:11.73px;color:#333;letter-spacing:-0.177px;'>AutoSave</div>
<div class="a" style="left:73.00px;top:184.40px;width:43.20px;height:19.60px;background:#FBFBFB;border:1px solid #6e6e6e;box-sizing:border-box;border-radius:10px;"></div>
<div class="a" style="left:76.40px;top:187.60px;width:13.40px;height:13.40px;background:#5C5C5C;border-radius:7px;"></div>
<div class="t" style='left:95.60px;top:190.00px;font-size:10.59px;color:#666;letter-spacing:-0.170px;'>Off</div>
<svg class="a" style="left:128.60px;top:187.40px;" width="17" height="17" viewBox="0 0 17 17"><path d="M1 1 H13.4 L16 3.6 V16 H1 Z" fill="#CB7BD8" stroke="#A23CB4" stroke-width="1.2" stroke-linejoin="round"/>
<rect x="4" y="1.4" width="8.6" height="5" fill="#FBFBFB" stroke="#A23CB4" stroke-width="1"/><rect x="4" y="10" width="9" height="6" fill="#FBFBFB" stroke="#A23CB4" stroke-width="1"/></svg>
<div class="t" style='left:149.00px;top:190.00px;font-size:11.07px;color:#333;letter-spacing:-0.409px;'>Save</div>
<svg class="a" style="left:190.00px;top:186.60px;" width="17" height="17" viewBox="0 0 17 17"><path d="M2 1.6 V7 H7.4" fill="none" stroke="#444" stroke-width="1.2" stroke-linecap="round" stroke-linejoin="round"/><path d="M2.2 6.8 C5 2.4 11 2 13.6 5.6 C16 9 13.6 12 6 16.4" fill="none" stroke="#444" stroke-width="1.2" stroke-linecap="round"/></svg>
<div class="t" style='left:210.40px;top:189.00px;font-size:12.13px;color:#333;letter-spacing:-0.236px;'>Undo</div>
<svg class="a" style="left:249.87px;top:193.21px;" width="6.26" height="4.39" viewBox="0 0 6.26 4.39"><polyline points="1,1 3.13,3.39 5.26,1" fill="none" stroke="#444" stroke-width="1.3" stroke-linecap="round" stroke-linejoin="round"/></svg>
<svg class="a" style="left:265.00px;top:186.00px;" width="19" height="19" viewBox="0 0 19 19"><path d="M13.36 3.16 A8 8 0 1 1 7.26 2.24" fill="none" stroke="#B2B2B2" stroke-width="1.2"/><path d="M1.2 2.2 H7.3 V7.7" fill="none" stroke="#B2B2B2" stroke-width="1.2"/></svg>
<div class="t" style='left:287.00px;top:190.00px;font-size:11.58px;color:#ABABAB;letter-spacing:-0.225px;'>Redo</div>
<svg class="a" style="left:331.00px;top:187.00px;" width="16" height="17" viewBox="0 0 16 17"><rect x="1" y="1" width="14" height="9.6" fill="#FBFBFB" stroke="#444" stroke-width="1.1"/><path d="M8 10.6 V15.4 M4.2 15.6 H11.8" stroke="#444" stroke-width="1.1"/>
<path d="M6 3 L10.4 5.7 L6 8.4 Z" fill="#2C9A4B"/></svg>
<div class="t" style='left:351.60px;top:189.00px;font-size:12.04px;color:#333;letter-spacing:-0.159px;'>From Beginning</div>
<svg class="a" style="left:449.00px;top:187.00px;" width="18" height="17" viewBox="0 0 18 17"><path d="M2 5.6 V1.2 H13 V4" fill="none" stroke="#555" stroke-width="1.1"/>
<rect x="6.4" y="6.6" width="10.4" height="9" fill="#FBFBFB" stroke="#555" stroke-width="1.1"/><path d="M6.4 9 H16.8" stroke="#555" stroke-width="1"/>
<path d="M3 7 C0.6 8.6 0.6 12 3.6 13 H5.6 M4 10.8 L6 13 L4 15.2" fill="none" stroke="#2E7FD1" stroke-width="1.1"/></svg>
<div class="t" style='left:470.30px;top:189.00px;font-size:12.14px;color:#333;letter-spacing:-0.166px;'>Switch Windows</div>
<svg class="a" style="left:561.07px;top:193.21px;" width="6.26" height="4.39" viewBox="0 0 6.26 4.39"><polyline points="1,1 3.13,3.39 5.26,1" fill="none" stroke="#444" stroke-width="1.3" stroke-linecap="round" stroke-linejoin="round"/></svg>
<svg class="a" style="left:583.00px;top:190.60px;" width="9" height="9" viewBox="0 0 9 9"><path d="M1 1.4 H8" stroke="#444" stroke-width="1.1"/><polyline points="1.6,4.6 4.5,7.4 7.4,4.6" fill="none" stroke="#444" stroke-width="1.1"/></svg>
</div>
</body></html>
